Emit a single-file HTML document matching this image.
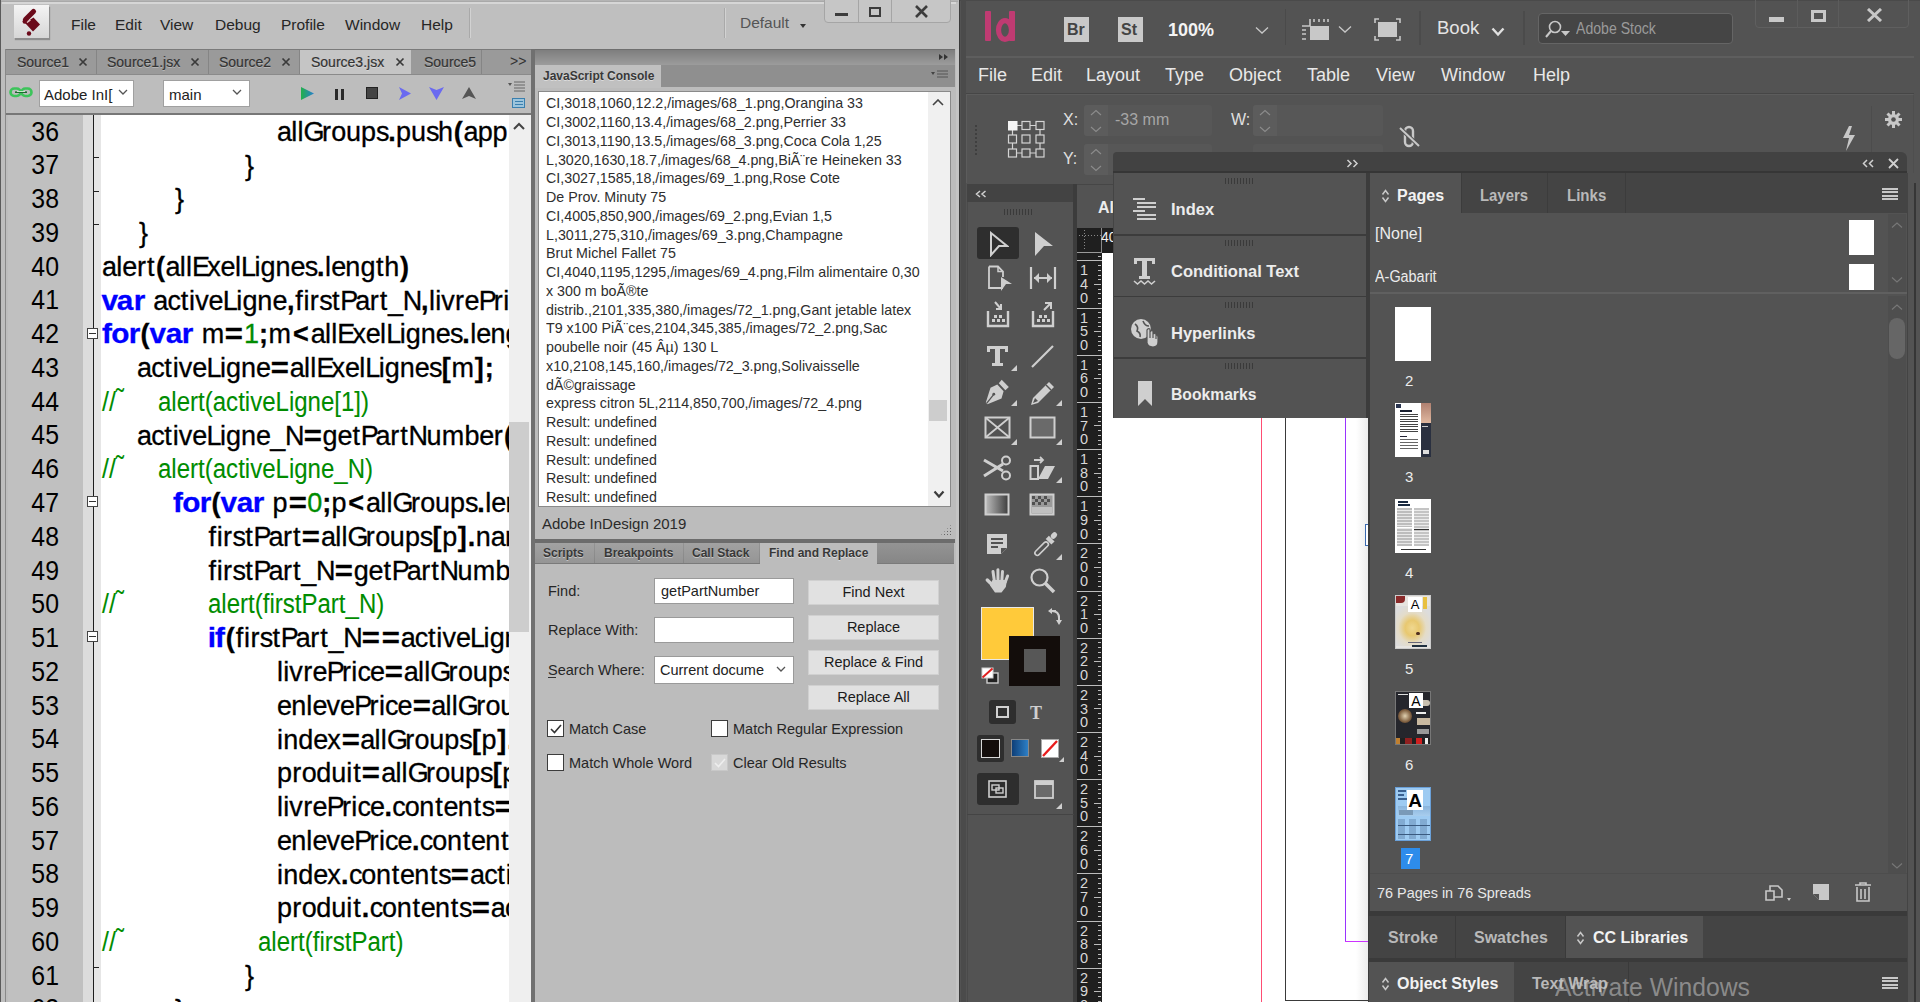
<!DOCTYPE html>
<html><head><meta charset="utf-8">
<style>
*{margin:0;padding:0;box-sizing:border-box}
html,body{width:1920px;height:1002px;overflow:hidden;background:#535353;font-family:"Liberation Sans",sans-serif}
.a{position:absolute}
.t{position:absolute;white-space:pre;line-height:1}
.tabt{text-shadow:0 1px 0 rgba(255,255,255,.35)}
/* ESTK */
#estk{position:absolute;left:0;top:0;width:960px;height:1002px;background:#bdbdbd;overflow:hidden}
.code{position:absolute;left:0;font-size:28px;color:#000;white-space:pre;line-height:1;transform-origin:0 0}
.code i{display:inline-block;text-align:center;font-style:normal;overflow:visible}
.kw{color:#0000ff;font-weight:bold}
.op{font-weight:bold}
.eq{transform:scaleX(1.15)}
.code .kw{transform:scaleX(1.1)}
.code{-webkit-text-stroke:0.3px currentColor}
.code span.cm{-webkit-text-stroke:0.1px currentColor}
.cm{color:#008c00}
.ln{position:absolute;font-size:28px;color:#000;line-height:1;width:60px;text-align:right}
.con{position:absolute;left:546px;font-size:15px;color:#2e2e2e;white-space:pre;line-height:1;transform-origin:0 0}
.btn{position:absolute;background:#e1e1e1;border:1px solid #d0d0d0;font-size:14.5px;color:#1a1a1a;text-align:center;line-height:23px}
.lbl{position:absolute;font-size:14.5px;color:#262626;white-space:pre;line-height:1}
.cb{position:absolute;width:17px;height:17px;background:#fff;border:1.5px solid #3c3c3c}
.tabb{position:absolute;font-size:12px;font-weight:bold;color:#383838;white-space:pre;line-height:1;text-shadow:0 1px 0 rgba(255,255,255,.45)}
/* InDesign */
.w{color:#f0f0f0}
.mi{position:absolute;font-size:18px;color:#e8e8e8;white-space:pre;line-height:1}
.ptab{position:absolute;font-size:16px;font-weight:bold;color:#b9b9b9;white-space:pre;line-height:1}
.rl{position:absolute;left:1080px;width:14px;font-size:14px;color:#f2f2f2;line-height:15.5px;text-align:center;font-family:"Liberation Sans",sans-serif}
</style></head><body>

<div id="estk">
<!-- title / menu bar -->
<div class="a" style="left:0;top:0;width:960px;height:49px;background:#bfbfbf"></div>
<div class="a" style="left:0;top:0;width:1px;height:1002px;background:#5a5a5a"></div>
<div class="a" style="left:1px;top:0;width:957px;height:1px;background:#b4b4b4"></div>
<div class="a" style="left:1px;top:1px;width:957px;height:1px;background:#a9a9a9"></div>
<div class="a" style="left:2px;top:2px;width:954px;height:2px;background:#d6d6d6"></div>
<!-- logo -->
<div class="a" style="left:14px;top:5px;width:35px;height:33px;background:linear-gradient(#f4f4f4,#d6d6d6);box-shadow:1px 2px 1px #8e8e8e"></div>
<svg class="a" style="left:10px;top:2px" width="44" height="40"><path d="M23.5 9.5 L15.5 17.5" stroke="#6b0a1a" stroke-width="5.2" stroke-linecap="round"/><path d="M23.5 15.5 L30 22.5 L23 29.5 L15 21 Z" fill="#6b0a1a"/><circle cx="14.8" cy="19.5" r="2.3" fill="#6b0a1a"/><circle cx="19" cy="31.5" r="2.2" fill="#6b0a1a"/><path d="M17 20.5 L20.5 18" stroke="#e8c8c8" stroke-width="1.2"/></svg>
<div class="t" style="left:71px;top:17px;font-size:15.5px;color:#262626">File</div>
<div class="t" style="left:115px;top:17px;font-size:15.5px;color:#262626">Edit</div>
<div class="t" style="left:160px;top:17px;font-size:15.5px;color:#262626">View</div>
<div class="t" style="left:215px;top:17px;font-size:15.5px;color:#262626">Debug</div>
<div class="t" style="left:281px;top:17px;font-size:15.5px;color:#262626">Profile</div>
<div class="t" style="left:345px;top:17px;font-size:15.5px;color:#262626">Window</div>
<div class="t" style="left:421px;top:17px;font-size:15.5px;color:#262626">Help</div>
<div class="a" style="left:724px;top:8px;width:1px;height:30px;background:#a9a9a9;box-shadow:1px 0 0 #d2d2d2"></div>
<div class="a" style="left:469px;top:8px;width:1px;height:30px;background:#a9a9a9;box-shadow:1px 0 0 #d2d2d2"></div>
<div class="t" style="left:740px;top:15px;font-size:15.5px;color:#555">Default</div>
<div class="a" style="left:800px;top:24px;width:0;height:0;border-left:3px solid transparent;border-right:3px solid transparent;border-top:4px solid #333"></div>
<!-- window buttons -->
<div class="a" style="left:824px;top:-2px;width:127px;height:25px;border:1px solid #a5a5a5;border-radius:0 0 4px 4px;background:#c6c6c6"></div>
<div class="a" style="left:858px;top:0;width:1px;height:23px;background:#a5a5a5"></div>
<div class="a" style="left:891px;top:0;width:1px;height:23px;background:#a5a5a5"></div>
<div class="a" style="left:835px;top:13px;width:13px;height:3px;background:#3c3c3c"></div>
<div class="a" style="left:869px;top:7px;width:12px;height:10px;border:2px solid #3c3c3c"></div>
<svg class="a" style="left:914px;top:5px" width="15" height="13"><path d="M2 1 L13 12 M13 1 L2 12" stroke="#3c3c3c" stroke-width="2.6"/></svg>
<!-- right edge of estk window -->
<div class="a" style="left:954px;top:49px;width:5px;height:953px;background:#c4c4c4;border-left:1px solid #8c8c8c"></div>
<div class="a" style="left:959px;top:0;width:2px;height:1002px;background:#3a3a3a"></div>

<!-- LEFT PANEL: tab bar -->
<div class="a" style="left:5px;top:49px;width:527px;height:953px;background:#bcbcbc;border-left:1px solid #888"></div>
<div class="a" style="left:6px;top:49px;width:526px;height:26px;background:#9a9a9a;border-top:1px solid #7a7a7a;border-bottom:1px solid #8a8a8a"></div>
<div class="a" style="left:96px;top:50px;width:1px;height:24px;background:#858585"></div>
<div class="a" style="left:208px;top:50px;width:1px;height:24px;background:#858585"></div>
<div class="a" style="left:299px;top:50px;width:1px;height:24px;background:#858585"></div>
<div class="a" style="left:300px;top:50px;width:111px;height:24px;background:#c5c5c5"></div>
<div class="a" style="left:481px;top:50px;width:1px;height:24px;background:#858585"></div>
<div class="t" style="left:17px;top:55px;font-size:14px;color:#333;-webkit-text-stroke:0.2px #333;text-shadow:0 1px 0 rgba(255,255,255,.3)">Source1</div>
<svg class="a" style="left:78px;top:57px" width="10" height="10"><path d="M1.5 1.5 L8.5 8.5 M8.5 1.5 L1.5 8.5" stroke="#3a3a3a" stroke-width="1.7"/></svg>
<div class="t" style="left:107px;top:55px;font-size:14px;color:#333;-webkit-text-stroke:0.2px #333;text-shadow:0 1px 0 rgba(255,255,255,.3)">Source1.jsx</div>
<svg class="a" style="left:190px;top:57px" width="10" height="10"><path d="M1.5 1.5 L8.5 8.5 M8.5 1.5 L1.5 8.5" stroke="#3a3a3a" stroke-width="1.7"/></svg>
<div class="t" style="left:219px;top:55px;font-size:14px;color:#333;-webkit-text-stroke:0.2px #333;text-shadow:0 1px 0 rgba(255,255,255,.3)">Source2</div>
<svg class="a" style="left:281px;top:57px" width="10" height="10"><path d="M1.5 1.5 L8.5 8.5 M8.5 1.5 L1.5 8.5" stroke="#3a3a3a" stroke-width="1.7"/></svg>
<div class="t" style="left:311px;top:55px;font-size:14px;color:#333;-webkit-text-stroke:0.2px #333;text-shadow:0 1px 0 rgba(255,255,255,.3)">Source3.jsx</div>
<svg class="a" style="left:395px;top:57px" width="10" height="10"><path d="M1.5 1.5 L8.5 8.5 M8.5 1.5 L1.5 8.5" stroke="#3a3a3a" stroke-width="1.7"/></svg>
<div class="t" style="left:424px;top:55px;font-size:14px;color:#333;-webkit-text-stroke:0.2px #333;text-shadow:0 1px 0 rgba(255,255,255,.3)">Source5</div>
<div class="t" style="left:510px;top:54px;font-size:14px;color:#333">&gt;&gt;</div>
<!-- toolbar -->
<div class="a" style="left:6px;top:75px;width:526px;height:39px;background:#bdbdbd"></div>
<svg class="a" style="left:9px;top:86px" width="24" height="13"><rect x="1.5" y="2.5" width="10" height="7.5" rx="3.7" fill="none" stroke="#3cc45a" stroke-width="2.6"/><rect x="12.5" y="2.5" width="10" height="7.5" rx="3.7" fill="none" stroke="#3cc45a" stroke-width="2.6"/><path d="M6 6.2 H18" stroke="#1e6a30" stroke-width="1.6"/><path d="M8 5.5 H16" stroke="#e8ffe8" stroke-width="0.8"/></svg>
<div class="a" style="left:39px;top:80px;width:95px;height:27px;background:#fff;border:1px solid #a0a0a0"></div>
<div class="t" style="left:44px;top:87px;font-size:15px;color:#222">Adobe InI[</div>
<svg class="a" style="left:118px;top:89px" width="10" height="7"><path d="M1 1 L5 5 L9 1" stroke="#555" fill="none" stroke-width="1.3"/></svg>
<div class="a" style="left:163px;top:80px;width:87px;height:27px;background:#fff;border:1px solid #a0a0a0"></div>
<div class="t" style="left:169px;top:87px;font-size:15px;color:#222">main</div>
<svg class="a" style="left:232px;top:89px" width="10" height="7"><path d="M1 1 L5 5 L9 1" stroke="#555" fill="none" stroke-width="1.3"/></svg>
<svg class="a" style="left:300px;top:86px" width="15" height="15"><defs><linearGradient id="gp" x1="0" x2="1"><stop offset="0" stop-color="#22b04a"/><stop offset="1" stop-color="#2a7fd0"/></linearGradient></defs><path d="M1 1 L14 7.5 L1 14 Z" fill="url(#gp)"/></svg>
<div class="a" style="left:335px;top:89px;width:3px;height:11px;background:#2a2a2a"></div>
<div class="a" style="left:341px;top:89px;width:3px;height:11px;background:#2a2a2a"></div>
<div class="a" style="left:366px;top:87px;width:12px;height:12px;background:#444;border:1px solid #222"></div>
<svg class="a" style="left:398px;top:86px" width="14" height="15"><path d="M1 1 L13 7.5 L1 14 L4 7.5 Z" fill="#6a6af0"/></svg>
<svg class="a" style="left:428px;top:86px" width="17" height="15"><path d="M1 1 L8.5 4 L16 1 L8.5 14 Z" fill="#6a6af0"/></svg>
<svg class="a" style="left:461px;top:86px" width="16" height="14"><path d="M8 1 L15 13 L8 10 L1 13 Z" fill="#555"/></svg>
<svg class="a" style="left:507px;top:80px" width="20" height="12"><path d="M1 3 L5 3 L3 6 Z" fill="#555"/><path d="M7 2 H18 M7 5 H18 M7 8 H18 M7 11 H18" stroke="#666" stroke-width="1"/></svg>
<div class="a" style="left:512px;top:98px;width:13px;height:10px;border:1.5px solid #3a7fae;background:#9cc4dc"></div>
<div class="a" style="left:515px;top:101px;width:8px;height:1px;background:#3a7fae"></div>
<div class="a" style="left:515px;top:104px;width:8px;height:1px;background:#3a7fae"></div>
<div class="a" style="left:6px;top:113px;width:526px;height:2px;background:#777"></div>

<!-- editor -->
<div class="a" style="left:8px;top:115px;width:75px;height:887px;background:#c0c0c0"></div>
<div class="a" style="left:83px;top:115px;width:10px;height:887px;background:#dcdcdc"></div>
<div class="a" style="left:93px;top:115px;width:1px;height:887px;background:#1e1e1e"></div>
<div class="a" style="left:94px;top:115px;width:7px;height:887px;background:#e6e6e6"></div>
<div class="a" style="left:101px;top:115px;width:408px;height:887px;background:#fff"></div>
<div class="a" style="left:509px;top:115px;width:22px;height:887px;background:#efefef"></div>
<div class="a" style="left:510px;top:120px;width:20px;height:512px;background:#efefef"></div>
<svg class="a" style="left:513px;top:122px" width="12" height="9"><path d="M1 7 L6 2 L11 7" stroke="#444" fill="none" stroke-width="2"/></svg>
<div class="a" style="left:509px;top:422px;width:20px;height:210px;background:#cdcdcd"></div>

<div id="codewrap" class="a" style="left:0;top:115px;width:509px;height:887px;overflow:hidden">
<div class="ln" style="left:-1px;top:3.6px;font-size:27px;transform:scaleX(0.92);transform-origin:100% 0">36</div>
<div class="code" style="left:277px;top:3.8px;font-size:27px"><i class="" style="width:14.18px">a</i><i class="" style="width:6.18px">l</i><i class="" style="width:6.18px">l</i><i class="" style="width:18.01px">G</i><i class="" style="width:9.72px">r</i><i class="" style="width:14.66px">o</i><i class="" style="width:15.07px">u</i><i class="" style="width:14.93px">p</i><i class="" style="width:12.04px">s</i><i class="op" style="width:8.18px">.</i><i class="" style="width:14.93px">p</i><i class="" style="width:15.07px">u</i><i class="" style="width:12.04px">s</i><i class="" style="width:15.07px">h</i><i class="op" style="width:10.34px">(</i><i class="" style="width:14.18px">a</i><i class="" style="width:14.93px">p</i><i class="" style="width:14.93px">p</i><i class="op" style="width:8.18px">.</i><i class="" style="width:14.18px">a</i><i class="" style="width:12.45px">c</i><i class="" style="width:9.02px">t</i><i class="" style="width:6.18px">i</i><i class="" style="width:13.45px">v</i><i class="" style="width:14.20px">e</i><i class="" style="width:18.31px">D</i><i class="" style="width:14.66px">o</i><i class="" style="width:12.45px">c</i><i class="" style="width:15.07px">u</i><i class="" style="width:22.84px">m</i><i class="" style="width:14.20px">e</i><i class="" style="width:15.07px">n</i><i class="" style="width:9.02px">t</i></div>
<div class="ln" style="left:-1px;top:37.4px;font-size:27px;transform:scaleX(0.92);transform-origin:100% 0">37</div>
<div class="code" style="left:243px;top:37.6px;font-size:27px"><i class="" style="width:12.96px">}</i></div>
<div class="ln" style="left:-1px;top:71.1px;font-size:27px;transform:scaleX(0.92);transform-origin:100% 0">38</div>
<div class="code" style="left:173px;top:71.3px;font-size:27px"><i class="" style="width:12.96px">}</i></div>
<div class="ln" style="left:-1px;top:104.9px;font-size:27px;transform:scaleX(0.92);transform-origin:100% 0">39</div>
<div class="code" style="left:137px;top:105.1px;font-size:27px"><i class="" style="width:12.96px">}</i></div>
<div class="ln" style="left:-1px;top:138.6px;font-size:27px;transform:scaleX(0.92);transform-origin:100% 0">40</div>
<div class="code" style="left:102px;top:138.8px;font-size:27px"><i class="" style="width:14.18px">a</i><i class="" style="width:6.18px">l</i><i class="" style="width:14.20px">e</i><i class="" style="width:9.72px">r</i><i class="" style="width:9.02px">t</i><i class="op" style="width:10.34px">(</i><i class="" style="width:14.18px">a</i><i class="" style="width:6.18px">l</i><i class="" style="width:6.18px">l</i><i class="" style="width:15.15px">E</i><i class="" style="width:13.37px">x</i><i class="" style="width:14.20px">e</i><i class="" style="width:6.18px">l</i><i class="" style="width:13.45px">L</i><i class="" style="width:6.18px">i</i><i class="" style="width:14.93px">g</i><i class="" style="width:15.07px">n</i><i class="" style="width:14.20px">e</i><i class="" style="width:12.04px">s</i><i class="op" style="width:8.18px">.</i><i class="" style="width:6.18px">l</i><i class="" style="width:14.20px">e</i><i class="" style="width:15.07px">n</i><i class="" style="width:14.93px">g</i><i class="" style="width:9.02px">t</i><i class="" style="width:15.07px">h</i><i class="op" style="width:10.34px">)</i></div>
<div class="ln" style="left:-1px;top:172.4px;font-size:27px;transform:scaleX(0.92);transform-origin:100% 0">41</div>
<div class="code" style="left:102px;top:172.6px;font-size:27px"><i class="kw" style="width:15.46px">v</i><i class="kw" style="width:16.30px">a</i><i class="kw" style="width:11.18px">r</i><i class="" style="width:8.45px"> </i><i class="" style="width:14.18px">a</i><i class="" style="width:12.45px">c</i><i class="" style="width:9.02px">t</i><i class="" style="width:6.18px">i</i><i class="" style="width:13.45px">v</i><i class="" style="width:14.20px">e</i><i class="" style="width:13.45px">L</i><i class="" style="width:6.18px">i</i><i class="" style="width:14.93px">g</i><i class="" style="width:15.07px">n</i><i class="" style="width:14.20px">e</i><i class="op" style="width:8.18px">,</i><i class="" style="width:8.59px">f</i><i class="" style="width:6.18px">i</i><i class="" style="width:9.72px">r</i><i class="" style="width:12.04px">s</i><i class="" style="width:9.02px">t</i><i class="" style="width:14.88px">P</i><i class="" style="width:14.18px">a</i><i class="" style="width:9.72px">r</i><i class="" style="width:9.02px">t</i><i class="" style="width:14.74px">_</i><i class="" style="width:18.01px">N</i><i class="op" style="width:8.18px">,</i><i class="" style="width:6.18px">l</i><i class="" style="width:6.18px">i</i><i class="" style="width:13.45px">v</i><i class="" style="width:9.72px">r</i><i class="" style="width:14.20px">e</i><i class="" style="width:14.88px">P</i><i class="" style="width:9.72px">r</i><i class="" style="width:6.18px">i</i><i class="" style="width:12.45px">c</i><i class="" style="width:14.20px">e</i><i class="op" style="width:8.18px">,</i><i class="" style="width:14.20px">e</i><i class="" style="width:15.07px">n</i><i class="" style="width:6.18px">l</i><i class="" style="width:14.20px">e</i><i class="" style="width:13.45px">v</i><i class="" style="width:14.20px">e</i><i class="" style="width:14.88px">P</i><i class="" style="width:9.72px">r</i><i class="" style="width:6.18px">i</i><i class="" style="width:12.45px">c</i><i class="" style="width:14.20px">e</i></div>
<div class="ln" style="left:-1px;top:206.2px;font-size:27px;transform:scaleX(0.92);transform-origin:100% 0">42</div>
<div class="code" style="left:102px;top:206.4px;font-size:27px"><i class="kw" style="width:9.87px">f</i><i class="kw" style="width:16.86px">o</i><i class="kw" style="width:11.18px">r</i><i class="op" style="width:10.34px">(</i><i class="kw" style="width:15.46px">v</i><i class="kw" style="width:16.30px">a</i><i class="kw" style="width:11.18px">r</i><i class="" style="width:8.45px"> </i><i class="" style="width:22.84px">m</i><i class="op eq" style="width:19.66px">=</i><i class="cm" style="width:14.74px">1</i><i class="op" style="width:9.56px">;</i><i class="" style="width:22.84px">m</i><i class="op" style="width:19.66px">&lt;</i><i class="" style="width:14.18px">a</i><i class="" style="width:6.18px">l</i><i class="" style="width:6.18px">l</i><i class="" style="width:15.15px">E</i><i class="" style="width:13.37px">x</i><i class="" style="width:14.20px">e</i><i class="" style="width:6.18px">l</i><i class="" style="width:13.45px">L</i><i class="" style="width:6.18px">i</i><i class="" style="width:14.93px">g</i><i class="" style="width:15.07px">n</i><i class="" style="width:14.20px">e</i><i class="" style="width:12.04px">s</i><i class="op" style="width:8.18px">.</i><i class="" style="width:6.18px">l</i><i class="" style="width:14.20px">e</i><i class="" style="width:15.07px">n</i><i class="" style="width:14.93px">g</i><i class="" style="width:9.02px">t</i><i class="" style="width:15.07px">h</i><i class="op" style="width:9.56px">;</i><i class="" style="width:22.84px">m</i><i class="" style="width:19.66px">+</i><i class="" style="width:19.66px">+</i><i class="op" style="width:10.34px">)</i><i class="" style="width:12.96px">{</i></div>
<div class="ln" style="left:-1px;top:239.9px;font-size:27px;transform:scaleX(0.92);transform-origin:100% 0">43</div>
<div class="code" style="left:137px;top:240.1px;font-size:27px"><i class="" style="width:14.18px">a</i><i class="" style="width:12.45px">c</i><i class="" style="width:9.02px">t</i><i class="" style="width:6.18px">i</i><i class="" style="width:13.45px">v</i><i class="" style="width:14.20px">e</i><i class="" style="width:13.45px">L</i><i class="" style="width:6.18px">i</i><i class="" style="width:14.93px">g</i><i class="" style="width:15.07px">n</i><i class="" style="width:14.20px">e</i><i class="op eq" style="width:19.66px">=</i><i class="" style="width:14.18px">a</i><i class="" style="width:6.18px">l</i><i class="" style="width:6.18px">l</i><i class="" style="width:15.15px">E</i><i class="" style="width:13.37px">x</i><i class="" style="width:14.20px">e</i><i class="" style="width:6.18px">l</i><i class="" style="width:13.45px">L</i><i class="" style="width:6.18px">i</i><i class="" style="width:14.93px">g</i><i class="" style="width:15.07px">n</i><i class="" style="width:14.20px">e</i><i class="" style="width:12.04px">s</i><i class="op" style="width:10.34px">[</i><i class="" style="width:22.84px">m</i><i class="op" style="width:10.34px">]</i><i class="op" style="width:9.56px">;</i></div>
<div class="ln" style="left:-1px;top:273.7px;font-size:27px;transform:scaleX(0.92);transform-origin:100% 0">44</div>
<div class="code" style="left:102px;top:273.9px;font-size:27px"><span class="cm" style="display:inline-block;font-size:27px;transform:scaleX(0.92);transform-origin:0 0">//<span style="position:relative;top:-3px">˜</span></span></div>
<div class="code" style="left:158px;top:273.9px;font-size:27px"><span class="cm" style="display:inline-block;transform:scaleX(0.89);transform-origin:0 0">alert(activeLigne[1])</span></div>
<div class="ln" style="left:-1px;top:307.4px;font-size:27px;transform:scaleX(0.92);transform-origin:100% 0">45</div>
<div class="code" style="left:137px;top:307.6px;font-size:27px"><i class="" style="width:14.18px">a</i><i class="" style="width:12.45px">c</i><i class="" style="width:9.02px">t</i><i class="" style="width:6.18px">i</i><i class="" style="width:13.45px">v</i><i class="" style="width:14.20px">e</i><i class="" style="width:13.45px">L</i><i class="" style="width:6.18px">i</i><i class="" style="width:14.93px">g</i><i class="" style="width:15.07px">n</i><i class="" style="width:14.20px">e</i><i class="" style="width:14.74px">_</i><i class="" style="width:18.01px">N</i><i class="op eq" style="width:19.66px">=</i><i class="" style="width:14.93px">g</i><i class="" style="width:14.20px">e</i><i class="" style="width:9.02px">t</i><i class="" style="width:14.88px">P</i><i class="" style="width:14.18px">a</i><i class="" style="width:9.72px">r</i><i class="" style="width:9.02px">t</i><i class="" style="width:18.01px">N</i><i class="" style="width:15.07px">u</i><i class="" style="width:22.84px">m</i><i class="" style="width:14.93px">b</i><i class="" style="width:14.20px">e</i><i class="" style="width:9.72px">r</i><i class="op" style="width:10.34px">(</i><i class="" style="width:14.18px">a</i><i class="" style="width:12.45px">c</i><i class="" style="width:9.02px">t</i><i class="" style="width:6.18px">i</i><i class="" style="width:13.45px">v</i><i class="" style="width:14.20px">e</i><i class="" style="width:13.45px">L</i><i class="" style="width:6.18px">i</i><i class="" style="width:14.93px">g</i><i class="" style="width:15.07px">n</i><i class="" style="width:14.20px">e</i><i class="op" style="width:10.34px">[</i><i class="" style="width:14.74px">1</i><i class="op" style="width:10.34px">]</i><i class="op" style="width:10.34px">)</i></div>
<div class="ln" style="left:-1px;top:341.2px;font-size:27px;transform:scaleX(0.92);transform-origin:100% 0">46</div>
<div class="code" style="left:102px;top:341.4px;font-size:27px"><span class="cm" style="display:inline-block;font-size:27px;transform:scaleX(0.92);transform-origin:0 0">//<span style="position:relative;top:-3px">˜</span></span></div>
<div class="code" style="left:158px;top:341.4px;font-size:27px"><span class="cm" style="display:inline-block;transform:scaleX(0.89);transform-origin:0 0">alert(activeLigne_N)</span></div>
<div class="ln" style="left:-1px;top:375.0px;font-size:27px;transform:scaleX(0.92);transform-origin:100% 0">47</div>
<div class="code" style="left:173px;top:375.2px;font-size:27px"><i class="kw" style="width:9.87px">f</i><i class="kw" style="width:16.86px">o</i><i class="kw" style="width:11.18px">r</i><i class="op" style="width:10.34px">(</i><i class="kw" style="width:15.46px">v</i><i class="kw" style="width:16.30px">a</i><i class="kw" style="width:11.18px">r</i><i class="" style="width:8.45px"> </i><i class="" style="width:14.93px">p</i><i class="op eq" style="width:19.66px">=</i><i class="cm" style="width:14.74px">0</i><i class="op" style="width:9.56px">;</i><i class="" style="width:14.93px">p</i><i class="op" style="width:19.66px">&lt;</i><i class="" style="width:14.18px">a</i><i class="" style="width:6.18px">l</i><i class="" style="width:6.18px">l</i><i class="" style="width:18.01px">G</i><i class="" style="width:9.72px">r</i><i class="" style="width:14.66px">o</i><i class="" style="width:15.07px">u</i><i class="" style="width:14.93px">p</i><i class="" style="width:12.04px">s</i><i class="op" style="width:8.18px">.</i><i class="" style="width:6.18px">l</i><i class="" style="width:14.20px">e</i><i class="" style="width:15.07px">n</i><i class="" style="width:14.93px">g</i><i class="" style="width:9.02px">t</i><i class="" style="width:15.07px">h</i><i class="op" style="width:9.56px">;</i><i class="" style="width:14.93px">p</i><i class="" style="width:19.66px">+</i><i class="" style="width:19.66px">+</i><i class="op" style="width:10.34px">)</i><i class="" style="width:12.96px">{</i></div>
<div class="ln" style="left:-1px;top:408.7px;font-size:27px;transform:scaleX(0.92);transform-origin:100% 0">48</div>
<div class="code" style="left:208px;top:408.9px;font-size:27px"><i class="" style="width:8.59px">f</i><i class="" style="width:6.18px">i</i><i class="" style="width:9.72px">r</i><i class="" style="width:12.04px">s</i><i class="" style="width:9.02px">t</i><i class="" style="width:14.88px">P</i><i class="" style="width:14.18px">a</i><i class="" style="width:9.72px">r</i><i class="" style="width:9.02px">t</i><i class="op eq" style="width:19.66px">=</i><i class="" style="width:14.18px">a</i><i class="" style="width:6.18px">l</i><i class="" style="width:6.18px">l</i><i class="" style="width:18.01px">G</i><i class="" style="width:9.72px">r</i><i class="" style="width:14.66px">o</i><i class="" style="width:15.07px">u</i><i class="" style="width:14.93px">p</i><i class="" style="width:12.04px">s</i><i class="op" style="width:10.34px">[</i><i class="" style="width:14.93px">p</i><i class="op" style="width:10.34px">]</i><i class="op" style="width:8.18px">.</i><i class="" style="width:15.07px">n</i><i class="" style="width:14.18px">a</i><i class="" style="width:22.84px">m</i><i class="" style="width:14.20px">e</i></div>
<div class="ln" style="left:-1px;top:442.5px;font-size:27px;transform:scaleX(0.92);transform-origin:100% 0">49</div>
<div class="code" style="left:208px;top:442.7px;font-size:27px"><i class="" style="width:8.59px">f</i><i class="" style="width:6.18px">i</i><i class="" style="width:9.72px">r</i><i class="" style="width:12.04px">s</i><i class="" style="width:9.02px">t</i><i class="" style="width:14.88px">P</i><i class="" style="width:14.18px">a</i><i class="" style="width:9.72px">r</i><i class="" style="width:9.02px">t</i><i class="" style="width:14.74px">_</i><i class="" style="width:18.01px">N</i><i class="op eq" style="width:19.66px">=</i><i class="" style="width:14.93px">g</i><i class="" style="width:14.20px">e</i><i class="" style="width:9.02px">t</i><i class="" style="width:14.88px">P</i><i class="" style="width:14.18px">a</i><i class="" style="width:9.72px">r</i><i class="" style="width:9.02px">t</i><i class="" style="width:18.01px">N</i><i class="" style="width:15.07px">u</i><i class="" style="width:22.84px">m</i><i class="" style="width:14.93px">b</i><i class="" style="width:14.20px">e</i><i class="" style="width:9.72px">r</i><i class="op" style="width:10.34px">(</i><i class="" style="width:8.59px">f</i><i class="" style="width:6.18px">i</i><i class="" style="width:9.72px">r</i><i class="" style="width:12.04px">s</i><i class="" style="width:9.02px">t</i><i class="" style="width:14.88px">P</i><i class="" style="width:14.18px">a</i><i class="" style="width:9.72px">r</i><i class="" style="width:9.02px">t</i><i class="op" style="width:10.34px">)</i></div>
<div class="ln" style="left:-1px;top:476.2px;font-size:27px;transform:scaleX(0.92);transform-origin:100% 0">50</div>
<div class="code" style="left:102px;top:476.4px;font-size:27px"><span class="cm" style="display:inline-block;font-size:27px;transform:scaleX(0.92);transform-origin:0 0">//<span style="position:relative;top:-3px">˜</span></span></div>
<div class="code" style="left:208px;top:476.4px;font-size:27px"><span class="cm" style="display:inline-block;transform:scaleX(0.89);transform-origin:0 0">alert(firstPart_N)</span></div>
<div class="ln" style="left:-1px;top:510.0px;font-size:27px;transform:scaleX(0.92);transform-origin:100% 0">51</div>
<div class="code" style="left:208px;top:510.2px;font-size:27px"><i class="kw" style="width:7.11px">i</i><i class="kw" style="width:9.87px">f</i><i class="op" style="width:10.34px">(</i><i class="" style="width:8.59px">f</i><i class="" style="width:6.18px">i</i><i class="" style="width:9.72px">r</i><i class="" style="width:12.04px">s</i><i class="" style="width:9.02px">t</i><i class="" style="width:14.88px">P</i><i class="" style="width:14.18px">a</i><i class="" style="width:9.72px">r</i><i class="" style="width:9.02px">t</i><i class="" style="width:14.74px">_</i><i class="" style="width:18.01px">N</i><i class="op eq" style="width:19.66px">=</i><i class="op eq" style="width:19.66px">=</i><i class="" style="width:14.18px">a</i><i class="" style="width:12.45px">c</i><i class="" style="width:9.02px">t</i><i class="" style="width:6.18px">i</i><i class="" style="width:13.45px">v</i><i class="" style="width:14.20px">e</i><i class="" style="width:13.45px">L</i><i class="" style="width:6.18px">i</i><i class="" style="width:14.93px">g</i><i class="" style="width:15.07px">n</i><i class="" style="width:14.20px">e</i><i class="" style="width:14.74px">_</i><i class="" style="width:18.01px">N</i><i class="op" style="width:10.34px">)</i><i class="" style="width:12.96px">{</i></div>
<div class="ln" style="left:-1px;top:543.8px;font-size:27px;transform:scaleX(0.92);transform-origin:100% 0">52</div>
<div class="code" style="left:277px;top:544.0px;font-size:27px"><i class="" style="width:6.18px">l</i><i class="" style="width:6.18px">i</i><i class="" style="width:13.45px">v</i><i class="" style="width:9.72px">r</i><i class="" style="width:14.20px">e</i><i class="" style="width:14.88px">P</i><i class="" style="width:9.72px">r</i><i class="" style="width:6.18px">i</i><i class="" style="width:12.45px">c</i><i class="" style="width:14.20px">e</i><i class="op eq" style="width:19.66px">=</i><i class="" style="width:14.18px">a</i><i class="" style="width:6.18px">l</i><i class="" style="width:6.18px">l</i><i class="" style="width:18.01px">G</i><i class="" style="width:9.72px">r</i><i class="" style="width:14.66px">o</i><i class="" style="width:15.07px">u</i><i class="" style="width:14.93px">p</i><i class="" style="width:12.04px">s</i><i class="op" style="width:10.34px">[</i><i class="" style="width:14.93px">p</i><i class="op" style="width:10.34px">]</i></div>
<div class="ln" style="left:-1px;top:577.5px;font-size:27px;transform:scaleX(0.92);transform-origin:100% 0">53</div>
<div class="code" style="left:277px;top:577.7px;font-size:27px"><i class="" style="width:14.20px">e</i><i class="" style="width:15.07px">n</i><i class="" style="width:6.18px">l</i><i class="" style="width:14.20px">e</i><i class="" style="width:13.45px">v</i><i class="" style="width:14.20px">e</i><i class="" style="width:14.88px">P</i><i class="" style="width:9.72px">r</i><i class="" style="width:6.18px">i</i><i class="" style="width:12.45px">c</i><i class="" style="width:14.20px">e</i><i class="op eq" style="width:19.66px">=</i><i class="" style="width:14.18px">a</i><i class="" style="width:6.18px">l</i><i class="" style="width:6.18px">l</i><i class="" style="width:18.01px">G</i><i class="" style="width:9.72px">r</i><i class="" style="width:14.66px">o</i><i class="" style="width:15.07px">u</i><i class="" style="width:14.93px">p</i><i class="" style="width:12.04px">s</i><i class="op" style="width:10.34px">[</i><i class="" style="width:14.93px">p</i><i class="op" style="width:10.34px">]</i></div>
<div class="ln" style="left:-1px;top:611.3px;font-size:27px;transform:scaleX(0.92);transform-origin:100% 0">54</div>
<div class="code" style="left:277px;top:611.5px;font-size:27px"><i class="" style="width:6.18px">i</i><i class="" style="width:15.07px">n</i><i class="" style="width:14.93px">d</i><i class="" style="width:14.20px">e</i><i class="" style="width:13.37px">x</i><i class="op eq" style="width:19.66px">=</i><i class="" style="width:14.18px">a</i><i class="" style="width:6.18px">l</i><i class="" style="width:6.18px">l</i><i class="" style="width:18.01px">G</i><i class="" style="width:9.72px">r</i><i class="" style="width:14.66px">o</i><i class="" style="width:15.07px">u</i><i class="" style="width:14.93px">p</i><i class="" style="width:12.04px">s</i><i class="op" style="width:10.34px">[</i><i class="" style="width:14.93px">p</i><i class="op" style="width:10.34px">]</i><i class="op" style="width:8.18px">.</i></div>
<div class="ln" style="left:-1px;top:645.0px;font-size:27px;transform:scaleX(0.92);transform-origin:100% 0">55</div>
<div class="code" style="left:277px;top:645.2px;font-size:27px"><i class="" style="width:14.93px">p</i><i class="" style="width:9.72px">r</i><i class="" style="width:14.66px">o</i><i class="" style="width:14.93px">d</i><i class="" style="width:15.07px">u</i><i class="" style="width:6.18px">i</i><i class="" style="width:9.02px">t</i><i class="op eq" style="width:19.66px">=</i><i class="" style="width:14.18px">a</i><i class="" style="width:6.18px">l</i><i class="" style="width:6.18px">l</i><i class="" style="width:18.01px">G</i><i class="" style="width:9.72px">r</i><i class="" style="width:14.66px">o</i><i class="" style="width:15.07px">u</i><i class="" style="width:14.93px">p</i><i class="" style="width:12.04px">s</i><i class="op" style="width:10.34px">[</i><i class="" style="width:14.93px">p</i><i class="op" style="width:10.34px">]</i></div>
<div class="ln" style="left:-1px;top:678.8px;font-size:27px;transform:scaleX(0.92);transform-origin:100% 0">56</div>
<div class="code" style="left:277px;top:679.0px;font-size:27px"><i class="" style="width:6.18px">l</i><i class="" style="width:6.18px">i</i><i class="" style="width:13.45px">v</i><i class="" style="width:9.72px">r</i><i class="" style="width:14.20px">e</i><i class="" style="width:14.88px">P</i><i class="" style="width:9.72px">r</i><i class="" style="width:6.18px">i</i><i class="" style="width:12.45px">c</i><i class="" style="width:14.20px">e</i><i class="op" style="width:8.18px">.</i><i class="" style="width:12.45px">c</i><i class="" style="width:14.66px">o</i><i class="" style="width:15.07px">n</i><i class="" style="width:9.02px">t</i><i class="" style="width:14.20px">e</i><i class="" style="width:15.07px">n</i><i class="" style="width:9.02px">t</i><i class="" style="width:12.04px">s</i><i class="op eq" style="width:19.66px">=</i><i class="" style="width:14.18px">a</i><i class="" style="width:12.45px">c</i><i class="" style="width:9.02px">t</i><i class="" style="width:6.18px">i</i><i class="" style="width:13.45px">v</i><i class="" style="width:14.20px">e</i><i class="" style="width:13.45px">L</i><i class="" style="width:6.18px">i</i><i class="" style="width:14.93px">g</i><i class="" style="width:15.07px">n</i><i class="" style="width:14.20px">e</i></div>
<div class="ln" style="left:-1px;top:712.6px;font-size:27px;transform:scaleX(0.92);transform-origin:100% 0">57</div>
<div class="code" style="left:277px;top:712.8px;font-size:27px"><i class="" style="width:14.20px">e</i><i class="" style="width:15.07px">n</i><i class="" style="width:6.18px">l</i><i class="" style="width:14.20px">e</i><i class="" style="width:13.45px">v</i><i class="" style="width:14.20px">e</i><i class="" style="width:14.88px">P</i><i class="" style="width:9.72px">r</i><i class="" style="width:6.18px">i</i><i class="" style="width:12.45px">c</i><i class="" style="width:14.20px">e</i><i class="op" style="width:8.18px">.</i><i class="" style="width:12.45px">c</i><i class="" style="width:14.66px">o</i><i class="" style="width:15.07px">n</i><i class="" style="width:9.02px">t</i><i class="" style="width:14.20px">e</i><i class="" style="width:15.07px">n</i><i class="" style="width:9.02px">t</i><i class="" style="width:12.04px">s</i><i class="op eq" style="width:19.66px">=</i><i class="" style="width:14.18px">a</i><i class="" style="width:12.45px">c</i><i class="" style="width:9.02px">t</i><i class="" style="width:6.18px">i</i><i class="" style="width:13.45px">v</i><i class="" style="width:14.20px">e</i><i class="" style="width:13.45px">L</i><i class="" style="width:6.18px">i</i><i class="" style="width:14.93px">g</i><i class="" style="width:15.07px">n</i><i class="" style="width:14.20px">e</i></div>
<div class="ln" style="left:-1px;top:746.3px;font-size:27px;transform:scaleX(0.92);transform-origin:100% 0">58</div>
<div class="code" style="left:277px;top:746.5px;font-size:27px"><i class="" style="width:6.18px">i</i><i class="" style="width:15.07px">n</i><i class="" style="width:14.93px">d</i><i class="" style="width:14.20px">e</i><i class="" style="width:13.37px">x</i><i class="op" style="width:8.18px">.</i><i class="" style="width:12.45px">c</i><i class="" style="width:14.66px">o</i><i class="" style="width:15.07px">n</i><i class="" style="width:9.02px">t</i><i class="" style="width:14.20px">e</i><i class="" style="width:15.07px">n</i><i class="" style="width:9.02px">t</i><i class="" style="width:12.04px">s</i><i class="op eq" style="width:19.66px">=</i><i class="" style="width:14.18px">a</i><i class="" style="width:12.45px">c</i><i class="" style="width:9.02px">t</i><i class="" style="width:6.18px">i</i><i class="" style="width:13.45px">v</i><i class="" style="width:14.20px">e</i><i class="" style="width:13.45px">L</i><i class="" style="width:6.18px">i</i><i class="" style="width:14.93px">g</i><i class="" style="width:15.07px">n</i><i class="" style="width:14.20px">e</i></div>
<div class="ln" style="left:-1px;top:780.1px;font-size:27px;transform:scaleX(0.92);transform-origin:100% 0">59</div>
<div class="code" style="left:277px;top:780.3px;font-size:27px"><i class="" style="width:14.93px">p</i><i class="" style="width:9.72px">r</i><i class="" style="width:14.66px">o</i><i class="" style="width:14.93px">d</i><i class="" style="width:15.07px">u</i><i class="" style="width:6.18px">i</i><i class="" style="width:9.02px">t</i><i class="op" style="width:8.18px">.</i><i class="" style="width:12.45px">c</i><i class="" style="width:14.66px">o</i><i class="" style="width:15.07px">n</i><i class="" style="width:9.02px">t</i><i class="" style="width:14.20px">e</i><i class="" style="width:15.07px">n</i><i class="" style="width:9.02px">t</i><i class="" style="width:12.04px">s</i><i class="op eq" style="width:19.66px">=</i><i class="" style="width:14.18px">a</i><i class="" style="width:12.45px">c</i><i class="" style="width:9.02px">t</i><i class="" style="width:6.18px">i</i><i class="" style="width:13.45px">v</i><i class="" style="width:14.20px">e</i><i class="" style="width:13.45px">L</i><i class="" style="width:6.18px">i</i><i class="" style="width:14.93px">g</i><i class="" style="width:15.07px">n</i><i class="" style="width:14.20px">e</i></div>
<div class="ln" style="left:-1px;top:813.8px;font-size:27px;transform:scaleX(0.92);transform-origin:100% 0">60</div>
<div class="code" style="left:102px;top:814.0px;font-size:27px"><span class="cm" style="display:inline-block;font-size:27px;transform:scaleX(0.92);transform-origin:0 0">//<span style="position:relative;top:-3px">˜</span></span></div>
<div class="code" style="left:258px;top:814.0px;font-size:27px"><span class="cm" style="display:inline-block;transform:scaleX(0.89);transform-origin:0 0">alert(firstPart)</span></div>
<div class="ln" style="left:-1px;top:847.6px;font-size:27px;transform:scaleX(0.92);transform-origin:100% 0">61</div>
<div class="code" style="left:243px;top:847.8px;font-size:27px"><i class="" style="width:12.96px">}</i></div>
<div class="ln" style="left:-1px;top:881.4px;font-size:27px;transform:scaleX(0.92);transform-origin:100% 0">62</div>
<div class="code" style="left:173px;top:881.6px;font-size:27px"><i class="" style="width:12.96px">}</i></div>
<div class="a" style="left:87px;top:212.6px;width:11px;height:11px;border:1px solid #444;background:#fff"></div><div class="a" style="left:89px;top:217.6px;width:7px;height:1px;background:#333"></div>
<div class="a" style="left:87px;top:381.4px;width:11px;height:11px;border:1px solid #444;background:#fff"></div><div class="a" style="left:89px;top:386.4px;width:7px;height:1px;background:#333"></div>
<div class="a" style="left:87px;top:516.4px;width:11px;height:11px;border:1px solid #444;background:#fff"></div><div class="a" style="left:89px;top:521.4px;width:7px;height:1px;background:#333"></div>
<div class="a" style="left:93px;top:41.8px;width:6px;height:1px;background:#222"></div>
<div class="a" style="left:93px;top:75.5px;width:6px;height:1px;background:#222"></div>
<div class="a" style="left:93px;top:109.3px;width:6px;height:1px;background:#222"></div>
<div class="a" style="left:93px;top:852.0px;width:6px;height:1px;background:#222"></div>
</div>

<!-- RIGHT PANEL -->
<div class="a" style="left:531px;top:49px;width:4px;height:953px;background:#707070"></div>
<div class="a" style="left:535px;top:49px;width:421px;height:953px;background:#bcbcbc"></div>
<div class="a" style="left:535px;top:49px;width:420px;height:16px;background:linear-gradient(#7e7e7e,#9c9c9c);border-top:1px solid #6e6e6e"></div>
<svg class="a" style="left:938px;top:53px" width="12" height="8"><path d="M1 1 L5 4 L1 7 Z M6 1 L10 4 L6 7 Z" fill="#333"/></svg>
<div class="a" style="left:535px;top:65px;width:420px;height:22px;background:#8f8f8f"></div>
<div class="a" style="left:535px;top:65px;width:126px;height:23px;background:#c0c0c0"></div>
<div class="tabb" style="left:543px;top:70px">JavaScript Console</div>
<svg class="a" style="left:930px;top:69px" width="20" height="10"><path d="M1 3 L5 3 L3 6 Z" fill="#444"/><path d="M7 2 H18 M7 5 H18 M7 8 H18" stroke="#555" stroke-width="1"/></svg>
<div class="a" style="left:538px;top:91px;width:413px;height:416px;background:#fff;border:1px solid #8a8a8a"></div>
<div class="a" style="left:928px;top:92px;width:22px;height:414px;background:#f0f0f0"></div>
<svg class="a" style="left:932px;top:99px" width="12" height="8"><path d="M1 6 L6 1 L11 6" stroke="#444" fill="none" stroke-width="1.6"/></svg>
<div class="a" style="left:929px;top:400px;width:18px;height:21px;background:#cdcdcd"></div>
<svg class="a" style="left:933px;top:490px" width="12" height="9"><path d="M1.5 1.5 L6 6.5 L10.5 1.5" stroke="#3c3c3c" fill="none" stroke-width="2.2"/></svg>
<div class="a" style="left:940px;top:524px;width:12px;height:12px;background:radial-gradient(circle,#666 0.6px,transparent 0.8px) 0 0/3px 3px;clip-path:polygon(100% 0,100% 100%,0 100%)"></div>
<div id="conwrap" class="a" style="left:0;top:0;width:928px;height:506px;overflow:hidden">
<div class="con" style="top:95.2px;transform:scaleX(0.95)">CI,3018,1060,12.2,/images/68_1.png,Orangina 33</div>
<div class="con" style="top:114.0px;transform:scaleX(0.95)">CI,3002,1160,13.4,/images/68_2.png,Perrier 33</div>
<div class="con" style="top:132.7px;transform:scaleX(0.95)">CI,3013,1190,13.5,/images/68_3.png,Coca Cola 1,25</div>
<div class="con" style="top:151.5px;transform:scaleX(0.95)">L,3020,1630,18.7,/images/68_4.png,BiÃ¨re Heineken 33</div>
<div class="con" style="top:170.2px;transform:scaleX(0.95)">CI,3027,1585,18,/images/69_1.png,Rose Cote</div>
<div class="con" style="top:189.0px;transform:scaleX(0.95)">De Prov. Minuty 75</div>
<div class="con" style="top:207.8px;transform:scaleX(0.95)">CI,4005,850,900,/images/69_2.png,Evian 1,5</div>
<div class="con" style="top:226.5px;transform:scaleX(0.95)">L,3011,275,310,/images/69_3.png,Champagne</div>
<div class="con" style="top:245.3px;transform:scaleX(0.95)">Brut Michel Fallet 75</div>
<div class="con" style="top:264.0px;transform:scaleX(0.95)">CI,4040,1195,1295,/images/69_4.png,Film alimentaire 0,30</div>
<div class="con" style="top:282.8px;transform:scaleX(0.95)">x 300 m boÃ®te</div>
<div class="con" style="top:301.6px;transform:scaleX(0.95)">distrib.,2101,335,380,/images/72_1.png,Gant jetable latex</div>
<div class="con" style="top:320.3px;transform:scaleX(0.95)">T9 x100 PiÃ¨ces,2104,345,385,/images/72_2.png,Sac</div>
<div class="con" style="top:339.1px;transform:scaleX(0.95)">poubelle noir (45 Âµ) 130 L</div>
<div class="con" style="top:357.8px;transform:scaleX(0.95)">x10,2108,145,160,/images/72_3.png,Solivaisselle</div>
<div class="con" style="top:376.6px;transform:scaleX(0.95)">dÃ©graissage</div>
<div class="con" style="top:395.4px;transform:scaleX(0.95)">express citron 5L,2114,850,700,/images/72_4.png</div>
<div class="con" style="top:414.1px;transform:scaleX(0.95)">Result: undefined</div>
<div class="con" style="top:432.9px;transform:scaleX(0.95)">Result: undefined</div>
<div class="con" style="top:451.6px;transform:scaleX(0.95)">Result: undefined</div>
<div class="con" style="top:470.4px;transform:scaleX(0.95)">Result: undefined</div>
<div class="con" style="top:489.2px;transform:scaleX(0.95)">Result: undefined</div>
<div class="con" style="top:507.9px;transform:scaleX(0.95)">Result: undefined</div>
</div>
<div class="t" style="left:542px;top:516px;font-size:15px;color:#2a2a2a">Adobe InDesign 2019</div>
<div class="a" style="left:535px;top:539px;width:420px;height:4px;background:#6c6c6c"></div>
<div class="a" style="left:535px;top:543px;width:419px;height:21px;background:linear-gradient(#949494,#868686);border-bottom:1px solid #7a7a7a"></div>
<div class="a" style="left:535px;top:543px;width:59px;height:20px;background:linear-gradient(#a2a2a2,#959595)"></div>
<div class="a" style="left:595px;top:543px;width:88px;height:20px;background:linear-gradient(#a2a2a2,#959595)"></div>
<div class="a" style="left:684px;top:543px;width:75px;height:20px;background:linear-gradient(#a2a2a2,#959595)"></div>
<div class="a" style="left:760px;top:543px;width:117px;height:21px;background:#bcbcbc"></div>
<div class="tabb" style="left:543px;top:547px">Scripts</div>
<div class="tabb" style="left:604px;top:547px">Breakpoints</div>
<div class="tabb" style="left:692px;top:547px">Call Stack</div>
<div class="tabb" style="left:769px;top:547px">Find and Replace</div>

<div class="lbl" style="left:548px;top:584px">Find:</div>
<div class="lbl" style="left:548px;top:623px">Replace With:</div>
<div class="lbl" style="left:548px;top:663px">Search Where:</div>
<div class="a" style="left:548px;top:677px;width:8px;height:1px;background:#333"></div>
<div class="a" style="left:654px;top:578px;width:140px;height:26px;background:#fff;border:1px solid #9a9a9a"></div>
<div class="t" style="left:661px;top:584px;font-size:14.5px;color:#222">getPartNumber</div>
<div class="a" style="left:654px;top:617px;width:140px;height:26px;background:#fff;border:1px solid #9a9a9a"></div>
<div class="a" style="left:654px;top:656px;width:140px;height:28px;background:#fff;border:1px solid #9a9a9a"></div>
<div class="t" style="left:660px;top:663px;font-size:14.5px;color:#222">Current docume</div>
<svg class="a" style="left:776px;top:666px" width="10" height="7"><path d="M1 1 L5 5 L9 1" stroke="#555" fill="none" stroke-width="1.3"/></svg>
<div class="btn" style="left:808px;top:580px;width:131px;height:25px">Find Next</div>
<div class="btn" style="left:808px;top:615px;width:131px;height:25px">Replace</div>
<div class="btn" style="left:808px;top:650px;width:131px;height:25px">Replace &amp; Find</div>
<div class="btn" style="left:808px;top:685px;width:131px;height:25px">Replace All</div>
<div class="cb" style="left:547px;top:720px"></div>
<svg class="a" style="left:549px;top:722px" width="14" height="13"><path d="M2 7 L5.5 10.5 L12 3" stroke="#333" fill="none" stroke-width="1.6"/></svg>
<div class="lbl" style="left:569px;top:722px">Match Case</div>
<div class="cb" style="left:711px;top:720px"></div>
<div class="lbl" style="left:733px;top:722px">Match Regular Expression</div>
<div class="cb" style="left:547px;top:754px"></div>
<div class="lbl" style="left:569px;top:756px">Match Whole Word</div>
<div class="cb" style="left:711px;top:754px;border-color:#c8c8c8;background:#d8d8d8"></div>
<svg class="a" style="left:713px;top:756px" width="14" height="13"><path d="M2 7 L5.5 10.5 L12 3" stroke="#eee" fill="none" stroke-width="1.6"/></svg>
<div class="lbl" style="left:733px;top:756px">Clear Old Results</div>
</div>

<!-- INDESIGN -->
<div id="id">
<div class="a" style="left:960px;top:0;width:960px;height:1002px;background:#535353"></div>
<div class="a" style="left:960px;top:0;width:960px;height:1px;background:#4a4a4a"></div>
<div class="a" style="left:961px;top:0;width:5px;height:1002px;background:#4b4b4b"></div>
<!-- logo -->
<svg class="a" style="left:980px;top:8px" width="40" height="38"><g fill="#bf3b72"><rect x="5" y="3" width="6" height="30" rx="1"/><rect x="29" y="3" width="6" height="30" rx="1"/></g><ellipse cx="25" cy="22" rx="6.5" ry="9.3" fill="none" stroke="#bf3b72" stroke-width="5.2"/></svg>
<div class="a" style="left:1064px;top:17px;width:25px;height:25px;background:#c9c9c9"></div>
<div class="t" style="left:1067px;top:22px;font-size:16px;font-weight:bold;color:#444">Br</div>
<div class="a" style="left:1118px;top:17px;width:25px;height:25px;background:#c9c9c9"></div>
<div class="t" style="left:1121px;top:22px;font-size:16px;font-weight:bold;color:#444">St</div>
<div class="t" style="left:1168px;top:21px;font-size:18px;font-weight:bold;color:#f4f4f4">100%</div>
<svg class="a" style="left:1255px;top:26px" width="14" height="9"><path d="M1 1.5 L7 7 L13 1.5" stroke="#c8c8c8" fill="none" stroke-width="1.3"/></svg>
<div class="a" style="left:1285px;top:9px;width:1px;height:36px;background:#4a4a4a"></div>
<svg class="a" style="left:1301px;top:18px" width="30" height="24"><rect x="9" y="8" width="19" height="14" fill="#c8c8c8"/><path d="M9 1 V8 M1 8 H9 M13 1 V4 M18 1 V4 M23 1 V4 M27 1 V4 M1 12 H5 M1 16 H5 M1 21 H5" stroke="#c8c8c8" stroke-width="1.6"/></svg>
<svg class="a" style="left:1338px;top:25px" width="14" height="9"><path d="M1 1.5 L7 7 L13 1.5" stroke="#c8c8c8" fill="none" stroke-width="1.3"/></svg>
<svg class="a" style="left:1374px;top:18px" width="27" height="23"><rect x="4" y="4" width="19" height="15" fill="#c8c8c8"/><path d="M1 5 V1 H5 M22 1 H26 V5 M26 18 V22 H22 M5 22 H1 V18" stroke="#c8c8c8" fill="none" stroke-width="1.6"/></svg>
<div class="a" style="left:1419px;top:11px;width:2px;height:34px;background:#4b4b4b"></div>
<div class="t" style="left:1437px;top:19px;font-size:18.5px;color:#e4e4e4">Book</div>
<svg class="a" style="left:1491px;top:27px" width="14" height="10"><path d="M1.5 1.5 L7 7.5 L12.5 1.5" stroke="#e0e0e0" fill="none" stroke-width="2.4"/></svg>
<div class="a" style="left:1523px;top:11px;width:2px;height:34px;background:#4b4b4b"></div>
<div class="a" style="left:1538px;top:13px;width:195px;height:31px;background:#454545;border:1px solid #656565;border-radius:4px"></div>
<svg class="a" style="left:1544px;top:19px" width="30" height="20"><circle cx="11" cy="8" r="5.5" stroke="#c8c8c8" fill="none" stroke-width="1.6"/><path d="M7 12 L2 18" stroke="#c8c8c8" stroke-width="2"/><path d="M17 12 H26 L21.5 17 Z" fill="#c8c8c8"/></svg>
<div class="t" style="left:1576px;top:21px;font-size:16px;color:#9a9a9a;transform:scaleX(0.88);transform-origin:0 0">Adobe Stock</div>
<!-- window controls -->
<div class="a" style="left:1755px;top:-3px;width:154px;height:31px;border:1px solid #5f5f5f;border-radius:0 0 4px 4px"></div>
<div class="a" style="left:1797px;top:0;width:1px;height:28px;background:#5c5c5c"></div>
<div class="a" style="left:1838px;top:0;width:1px;height:28px;background:#5c5c5c"></div>
<div class="a" style="left:1769px;top:17px;width:15px;height:5px;background:#c8c8c8"></div>
<div class="a" style="left:1811px;top:10px;width:15px;height:12px;border:3px solid #c8c8c8"></div>
<svg class="a" style="left:1866px;top:8px" width="17" height="14"><path d="M2 1 L15 13 M15 1 L2 13" stroke="#c8c8c8" stroke-width="3"/></svg>

<!-- menubar -->
<div class="a" style="left:966px;top:56px;width:948px;height:2px;background:#5e5e5e"></div>
<div class="a" style="left:966px;top:93px;width:948px;height:1px;background:#464646"></div>
<div class="mi" style="left:978px;top:66px">File</div>
<div class="mi" style="left:1031px;top:66px">Edit</div>
<div class="mi" style="left:1086px;top:66px">Layout</div>
<div class="mi" style="left:1165px;top:66px">Type</div>
<div class="mi" style="left:1229px;top:66px">Object</div>
<div class="mi" style="left:1307px;top:66px">Table</div>
<div class="mi" style="left:1376px;top:66px">View</div>
<div class="mi" style="left:1441px;top:66px">Window</div>
<div class="mi" style="left:1533px;top:66px">Help</div>

<!-- control panel -->
<div class="a" style="left:966px;top:94px;width:948px;height:89px;background:#535353;border-top:1px solid #5c5c5c;border-left:1px solid #5c5c5c;border-right:1px solid #4e4e4e"></div>
<div class="a" style="left:975px;top:125px;width:2px;height:30px;background:repeating-linear-gradient(#3f3f3f 0 2px,transparent 2px 4px)"></div>
<svg class="a" style="left:1007px;top:120px" width="40" height="40"><g fill="none" stroke="#d4d4d4" stroke-width="1.2"><rect x="15" y="1.5" width="8" height="8"/><rect x="29" y="1.5" width="8" height="8"/><rect x="1.5" y="15" width="8" height="8"/><rect x="15" y="15" width="8" height="8"/><rect x="29" y="15" width="8" height="8"/><rect x="1.5" y="29" width="8" height="8"/><rect x="15" y="29" width="8" height="8"/><rect x="29" y="29" width="8" height="8"/><path d="M9.5 5.5 H15 M23 5.5 H29 M5.5 9.5 V15 M33 9.5 V15 M5.5 23 V29 M33 23 V29 M9.5 33 H15 M23 33 H29"/></g><rect x="1" y="1" width="9.5" height="9.5" fill="#f4f4f4"/></svg>
<div class="t" style="left:1063px;top:112px;font-size:16px;color:#e0e0e0">X:</div>
<div class="t" style="left:1063px;top:151px;font-size:16px;color:#e0e0e0">Y:</div>
<div class="a" style="left:1084px;top:105px;width:128px;height:31px;background:#575757;border-radius:3px"></div>
<div class="a" style="left:1084px;top:105px;width:24px;height:31px;background:#5c5c5c;border-radius:3px 0 0 3px"></div>
<svg class="a" style="left:1089px;top:108px" width="14" height="26"><path d="M2 7 L7 2.5 L12 7 M2 19 L7 23.5 L12 19" stroke="#8c8c8c" fill="none" stroke-width="1.1"/></svg>
<div class="t" style="left:1115px;top:112px;font-size:16px;color:#a6a6a6">-33 mm</div>
<div class="a" style="left:1084px;top:144px;width:128px;height:31px;background:#575757;border-radius:3px"></div>
<div class="a" style="left:1084px;top:144px;width:24px;height:31px;background:#5c5c5c;border-radius:3px 0 0 3px"></div>
<svg class="a" style="left:1089px;top:147px" width="14" height="26"><path d="M2 7 L7 2.5 L12 7 M2 19 L7 23.5 L12 19" stroke="#8c8c8c" fill="none" stroke-width="1.1"/></svg>
<div class="t" style="left:1231px;top:112px;font-size:16px;color:#e0e0e0">W:</div>
<div class="a" style="left:1253px;top:105px;width:130px;height:31px;background:#575757;border-radius:3px"></div>
<div class="a" style="left:1253px;top:105px;width:24px;height:31px;background:#5c5c5c;border-radius:3px 0 0 3px"></div>
<svg class="a" style="left:1258px;top:108px" width="14" height="26"><path d="M2 7 L7 2.5 L12 7 M2 19 L7 23.5 L12 19" stroke="#8c8c8c" fill="none" stroke-width="1.1"/></svg>
<div class="a" style="left:1253px;top:144px;width:130px;height:31px;background:#575757;border-radius:3px"></div>
<svg class="a" style="left:1398px;top:125px" width="24" height="24"><rect x="7" y="2" width="8" height="19" rx="4" stroke="#c8c8c8" fill="none" stroke-width="2.4"/><path d="M2 3 L21 21" stroke="#535353" stroke-width="4"/><path d="M2 3 L21 21" stroke="#c8c8c8" stroke-width="2"/></svg>
<svg class="a" style="left:1840px;top:125px" width="17" height="27"><path d="M9 1 L3 13 L9 13 L6 26 L15 10 L9 10 L12 1 Z" fill="#c8c8c8"/></svg>
<div class="a" style="left:1871px;top:106px;width:1px;height:47px;background:#4c4c4c"></div>
<svg class="a" style="left:1885px;top:111px" width="17" height="17"><g fill="#c8c8c8"><circle cx="8.5" cy="8.5" r="5.5"/><rect x="7" y="0" width="3" height="17"/><rect x="0" y="7" width="17" height="3"/><rect x="7" y="0" width="3" height="17" transform="rotate(45 8.5 8.5)"/><rect x="7" y="0" width="3" height="17" transform="rotate(-45 8.5 8.5)"/></g><circle cx="8.5" cy="8.5" r="2.3" fill="#535353"/></svg>

<!-- tools panel -->
<div class="a" style="left:967px;top:184px;width:107px;height:818px;background:#535353;border-left:1px solid #4a4a4a"></div>
<div class="a" style="left:967px;top:184px;width:107px;height:18px;background:#434343"></div>
<svg class="a" style="left:975px;top:190px" width="12" height="8"><path d="M5 1 L1.5 4 L5 7 M10.5 1 L7 4 L10.5 7" stroke="#d0d0d0" fill="none" stroke-width="1.5"/></svg>
<div class="a" style="left:1004px;top:209px;width:30px;height:6px;background:repeating-linear-gradient(90deg,#3a3a3a 0 1px,transparent 1px 3px)"></div>
<div class="a" style="left:1073px;top:184px;width:4px;height:818px;background:#3c3c3c"></div>
<div class="a" style="left:967px;top:814px;width:107px;height:1px;background:#444"></div>
<div class="a" style="left:977px;top:227px;width:42px;height:32px;background:#2e2e2e;border-radius:3px"></div>

<svg class="a" style="left:989px;top:231px" width="20" height="26"><path d="M2 2 L18 15 L10 15 L2 24 Z" fill="none" stroke="#cfcfcf" stroke-width="2"/></svg>
<svg class="a" style="left:1034px;top:231px" width="20" height="26"><path d="M1 1 L19 15 L10 15 L1 25 Z" fill="#cfcfcf"/></svg>
<svg class="a" style="left:987px;top:265px" width="26" height="27"><path d="M2 1.5 H11 L16 6.5 V12 M16 23 H2 V1.5" fill="none" stroke="#cfcfcf" stroke-width="1.8"/><path d="M11 1.5 V6.5 H16" fill="none" stroke="#cfcfcf" stroke-width="1.5"/><path d="M14 12 L25 19 L19 19 L14 26 Z" fill="#cfcfcf"/></svg>
<svg class="a" style="left:1029px;top:266px" width="28" height="24"><path d="M2 1 V23 M26 1 V23 M5 12 H23" stroke="#cfcfcf" stroke-width="2.2"/><path d="M5 12 L10 7 V17 Z M23 12 L18 7 V17 Z" fill="#cfcfcf"/></svg>
<svg class="a" style="left:986px;top:301px" width="24" height="27"><path d="M2 10 V25 H22 V10" fill="none" stroke="#cfcfcf" stroke-width="2.4"/><path d="M6 18 h3 v3 h-3z M11 18 h3 v3 h-3z M16 18 h3 v3 h-3z M8 14 h3 v3 h-3z M13 14 h3 v3 h-3z" fill="#cfcfcf"/><path d="M9 1 L15 8 M15 3 V8 H10" stroke="#cfcfcf" fill="none" stroke-width="2"/></svg>
<svg class="a" style="left:1031px;top:301px" width="24" height="27"><path d="M2 10 V25 H22 V10" fill="none" stroke="#cfcfcf" stroke-width="2.4"/><path d="M6 18 h3 v3 h-3z M11 18 h3 v3 h-3z M16 18 h3 v3 h-3z M8 14 h3 v3 h-3z M13 14 h3 v3 h-3z" fill="#cfcfcf"/><path d="M13 9 L20 2 M14 2 H20 V8" stroke="#cfcfcf" fill="none" stroke-width="2"/></svg>
<svg class="a" style="left:986px;top:344px" width="32" height="28"><path d="M1 2 H22 V8 H19 V5 H14 V19 H17 V22 H6 V19 H9 V5 H4 V8 H1 Z" fill="#cfcfcf"/><path d="M25 27 L31 21 V27 Z" fill="#cfcfcf"/></svg>
<svg class="a" style="left:1030px;top:344px" width="25" height="25"><path d="M2 23 L23 2" stroke="#cfcfcf" stroke-width="2.2"/></svg>
<svg class="a" style="left:984px;top:379px" width="34" height="28"><path d="M1.8 23.5 L6.5 8.8 L13.3 5.6 L19.6 12.3 L17.5 19.4 L3.4 25.2 Z" fill="#cfcfcf"/><path d="M14.8 4.3 L17.7 0.8 L24.8 7.9 L21.4 11.2 Z" fill="#cfcfcf"/><path d="M2.6 24.3 L9.6 15.6" stroke="#535353" stroke-width="1.3"/><circle cx="9.8" cy="15.2" r="1.4" fill="#535353"/><path d="M27 27 L33 21 V27 Z" fill="#cfcfcf"/></svg>
<svg class="a" style="left:1029px;top:379px" width="34" height="28"><path d="M20 3 L25 8 L9 24 L2 26 L4 19 Z" fill="#cfcfcf"/><path d="M4 24 L6 19 L9 22 Z" fill="#535353"/><path d="M17 6 L22 11" stroke="#535353" stroke-width="1.4"/><path d="M27 27 L33 21 V27 Z" fill="#cfcfcf"/></svg>
<svg class="a" style="left:984px;top:416px" width="34" height="30"><rect x="1.5" y="1.5" width="24" height="20" fill="none" stroke="#cfcfcf" stroke-width="2"/><path d="M2 2 L25 21 M25 2 L2 21" stroke="#cfcfcf" stroke-width="1.8"/><path d="M27 29 L33 23 V29 Z" fill="#cfcfcf"/></svg>
<svg class="a" style="left:1029px;top:416px" width="34" height="30"><rect x="1.5" y="1.5" width="24" height="20" fill="#6a6a6a" stroke="#cfcfcf" stroke-width="2"/><path d="M27 29 L33 23 V29 Z" fill="#cfcfcf"/></svg>
<svg class="a" style="left:983px;top:455px" width="30" height="27"><circle cx="23" cy="5.5" r="4" fill="none" stroke="#cfcfcf" stroke-width="2"/><circle cx="23" cy="20.5" r="4" fill="none" stroke="#cfcfcf" stroke-width="2"/><path d="M1 5 L20 16 M1 21 L20 9" stroke="#cfcfcf" stroke-width="3"/></svg>
<svg class="a" style="left:1029px;top:454px" width="34" height="30"><path d="M5 6 H14 M11 3 L14 6 L11 9" stroke="#cfcfcf" fill="none" stroke-width="1.8"/><path d="M1.5 12 H9 V25 H1.5 Z" fill="none" stroke="#cfcfcf" stroke-width="2"/><path d="M9 25 L16 12 H26 L19 25 Z" fill="#cfcfcf"/><path d="M27 29 L33 23 V29 Z" fill="#cfcfcf"/></svg>
<svg class="a" style="left:984px;top:493px" width="26" height="23"><defs><linearGradient id="gg" x1="0" x2="1"><stop offset="0" stop-color="#bdbdbd"/><stop offset="1" stop-color="#3c3c3c"/></linearGradient></defs><rect x="1.5" y="1.5" width="23" height="20" fill="url(#gg)" stroke="#cfcfcf" stroke-width="2"/></svg>
<svg class="a" style="left:1029px;top:493px" width="26" height="23"><rect x="1.5" y="1.5" width="23" height="20" fill="#9a9a9a" stroke="#cfcfcf" stroke-width="2"/><path d="M3 3 h3 v3 h-3z M9 3 h3 v3 h-3z M15 3 h3 v3 h-3z M6 6 h3 v3 h-3z M12 6 h3 v3 h-3z M18 6 h3 v3 h-3z M3 9 h3 v3 h-3z M9 9 h3 v3 h-3z M15 9 h3 v3 h-3z" fill="#505050"/><rect x="3" y="14" width="20" height="6" fill="#c0c0c0"/></svg>
<svg class="a" style="left:986px;top:533px" width="24" height="24"><path d="M1 1 H21 V15 L15 21 H1 Z" fill="#cfcfcf"/><path d="M5 6 H17 M5 10 H17 M5 14 H12" stroke="#535353" stroke-width="1.8"/><path d="M15 21 V15 H21" fill="#535353"/></svg>
<svg class="a" style="left:1029px;top:531px" width="34" height="30"><g transform="translate(13 17.3) rotate(45)"><rect x="-2.4" y="-8" width="4.8" height="17" rx="2.4" fill="none" stroke="#cfcfcf" stroke-width="1.6"/></g><g transform="translate(21.3 9) rotate(45)"><rect x="-4" y="-2" width="8" height="4.5" fill="#cfcfcf"/></g><g transform="translate(24.2 5.2) rotate(45)"><rect x="-2.6" y="-4.5" width="5.2" height="7" rx="2.6" fill="#cfcfcf"/></g><path d="M27 29 L33 23 V29 Z" fill="#cfcfcf"/></svg>
<svg class="a" style="left:984px;top:567px" width="28" height="28"><g stroke="#cfcfcf" stroke-linecap="round" stroke-width="3"><path d="M9 4.5 L10.5 15 M13.9 2.8 L14 14 M18.5 4.5 L17.8 14 M23.6 9 L21.3 15"/><path d="M3.3 13 L9 18.5" stroke-width="3.4"/></g><path d="M8.5 13 L23 13 L21.8 20 L17.5 25.5 L11 25.5 L6 18.5 Z" fill="#cfcfcf"/></svg>
<svg class="a" style="left:1029px;top:567px" width="27" height="28"><circle cx="10.5" cy="10.5" r="8" fill="none" stroke="#cfcfcf" stroke-width="2.2"/><path d="M16 16 L25 25" stroke="#cfcfcf" stroke-width="3.5"/></svg>
<!-- fill/stroke -->
<svg class="a" style="left:1047px;top:608px" width="19" height="18"><path d="M3 3 H9 M12 8 V15" stroke="#cfcfcf" stroke-width="2" fill="none"/><path d="M1 3 L5 0 V6 Z M12 17 L9 12 H15 Z" fill="#cfcfcf"/><path d="M5 3 Q12 3 12 10" stroke="#cfcfcf" stroke-width="2" fill="none"/></svg>
<div class="a" style="left:981px;top:607px;width:53px;height:53px;background:#ffca3a;border:1px solid #e8e8e8"></div>
<div class="a" style="left:1009px;top:636px;width:51px;height:50px;background:#130d0b"></div>
<div class="a" style="left:1024px;top:649px;width:22px;height:23px;background:#575757"></div>
<svg class="a" style="left:981px;top:667px" width="19" height="17"><rect x="6" y="6" width="11" height="10" fill="#222" stroke="#cfcfcf" stroke-width="1.4"/><rect x="1" y="1" width="11" height="10" fill="#fff" stroke="#cfcfcf" stroke-width="1"/><path d="M1.5 10.5 L11.5 1.5" stroke="#e02020" stroke-width="2"/></svg>
<div class="a" style="left:989px;top:700px;width:27px;height:24px;background:#2e2e2e;border-radius:3px"></div>
<div class="a" style="left:996px;top:706px;width:13px;height:12px;border:2px solid #cfcfcf"></div>
<div class="t" style="left:1030px;top:704px;font-size:18px;font-weight:bold;color:#cfcfcf;font-family:'Liberation Serif',serif">T</div>
<div class="a" style="left:977px;top:735px;width:27px;height:27px;background:#2e2e2e;border-radius:3px"></div>
<div class="a" style="left:981px;top:739px;width:19px;height:19px;background:#130d0b;border:1px solid #d8d8d8"></div>
<div class="a" style="left:1011px;top:739px;width:18px;height:18px;background:linear-gradient(90deg,#0e3f78,#2d7fc6);border:1px solid #888"></div>
<svg class="a" style="left:1041px;top:739px" width="24" height="24"><rect x="0.5" y="0.5" width="17" height="18" fill="#fff" stroke="#aaa"/><path d="M2 17 L16 2" stroke="#e81c1c" stroke-width="2.4"/><path d="M18 23 L23 18 V23 Z" fill="#cfcfcf"/></svg>
<div class="a" style="left:977px;top:773px;width:42px;height:32px;background:#2e2e2e;border-radius:3px"></div>
<svg class="a" style="left:988px;top:780px" width="20" height="18"><rect x="1" y="1" width="17" height="16" fill="none" stroke="#cfcfcf" stroke-width="1.6"/><rect x="4" y="5" width="7" height="5" fill="none" stroke="#cfcfcf" stroke-width="1.4"/><rect x="8" y="8" width="7" height="5" fill="none" stroke="#cfcfcf" stroke-width="1.4"/></svg>
<svg class="a" style="left:1034px;top:780px" width="30" height="30"><rect x="1" y="1" width="18" height="17" fill="#6a6a6a" stroke="#cfcfcf" stroke-width="1.8"/><rect x="1" y="1" width="18" height="4" fill="#cfcfcf"/><path d="M22 29 L28 23 V29 Z" fill="#cfcfcf"/></svg>


<!-- document area -->
<div class="a" style="left:1077px;top:185px;width:40px;height:43px;background:#535353"></div>
<div class="a" style="left:1077px;top:184px;width:40px;height:1px;background:#464646"></div>
<div class="t" style="left:1098px;top:200px;font-size:16px;font-weight:bold;color:#ececec">Al</div>
<div class="a" style="left:1077px;top:228px;width:36px;height:774px;background:#1f1f1f"></div>
<div class="a" style="left:1102px;top:253px;width:266px;height:749px;background:#fff"></div>
<div class="a" style="left:1356px;top:253px;width:12px;height:749px;background:linear-gradient(90deg,#fff,#ececec)"></div>
<div class="a" style="left:1077px;top:252px;width:25px;height:1px;background:#7a7a7a"></div>
<div class="a" style="left:1101px;top:228px;width:1px;height:25px;background:#8a8a8a"></div>
<div class="t" style="left:1101px;top:230px;font-size:14px;color:#f0f0f0">40</div>
<div class="a" style="left:1098px;top:255.7px;width:3px;height:1px;background:#bdbdbd"></div>
<div class="a" style="left:1077px;top:260.4px;width:25px;height:1px;background:#bdbdbd"></div>
<div class="a" style="left:1098px;top:265.1px;width:3px;height:1px;background:#bdbdbd"></div>
<div class="a" style="left:1098px;top:269.8px;width:3px;height:1px;background:#bdbdbd"></div>
<div class="a" style="left:1098px;top:274.5px;width:3px;height:1px;background:#bdbdbd"></div>
<div class="a" style="left:1098px;top:279.3px;width:3px;height:1px;background:#bdbdbd"></div>
<div class="a" style="left:1094px;top:284.0px;width:7px;height:1px;background:#bdbdbd"></div>
<div class="a" style="left:1098px;top:288.7px;width:3px;height:1px;background:#bdbdbd"></div>
<div class="a" style="left:1098px;top:293.4px;width:3px;height:1px;background:#bdbdbd"></div>
<div class="a" style="left:1098px;top:298.1px;width:3px;height:1px;background:#bdbdbd"></div>
<div class="a" style="left:1098px;top:302.8px;width:3px;height:1px;background:#bdbdbd"></div>
<div class="t" style="left:1080px;top:263.4px;font-size:14.5px;color:#d8d8d8">1</div>
<div class="t" style="left:1080px;top:277.1px;font-size:14.5px;color:#d8d8d8">4</div>
<div class="t" style="left:1080px;top:290.8px;font-size:14.5px;color:#d8d8d8">0</div>
<div class="a" style="left:1077px;top:307.5px;width:25px;height:1px;background:#bdbdbd"></div>
<div class="a" style="left:1098px;top:312.3px;width:3px;height:1px;background:#bdbdbd"></div>
<div class="a" style="left:1098px;top:317.0px;width:3px;height:1px;background:#bdbdbd"></div>
<div class="a" style="left:1098px;top:321.7px;width:3px;height:1px;background:#bdbdbd"></div>
<div class="a" style="left:1098px;top:326.4px;width:3px;height:1px;background:#bdbdbd"></div>
<div class="a" style="left:1094px;top:331.1px;width:7px;height:1px;background:#bdbdbd"></div>
<div class="a" style="left:1098px;top:335.8px;width:3px;height:1px;background:#bdbdbd"></div>
<div class="a" style="left:1098px;top:340.6px;width:3px;height:1px;background:#bdbdbd"></div>
<div class="a" style="left:1098px;top:345.3px;width:3px;height:1px;background:#bdbdbd"></div>
<div class="a" style="left:1098px;top:350.0px;width:3px;height:1px;background:#bdbdbd"></div>
<div class="t" style="left:1080px;top:310.5px;font-size:14.5px;color:#d8d8d8">1</div>
<div class="t" style="left:1080px;top:324.2px;font-size:14.5px;color:#d8d8d8">5</div>
<div class="t" style="left:1080px;top:337.9px;font-size:14.5px;color:#d8d8d8">0</div>
<div class="a" style="left:1077px;top:354.7px;width:25px;height:1px;background:#bdbdbd"></div>
<div class="a" style="left:1098px;top:359.4px;width:3px;height:1px;background:#bdbdbd"></div>
<div class="a" style="left:1098px;top:364.1px;width:3px;height:1px;background:#bdbdbd"></div>
<div class="a" style="left:1098px;top:368.8px;width:3px;height:1px;background:#bdbdbd"></div>
<div class="a" style="left:1098px;top:373.6px;width:3px;height:1px;background:#bdbdbd"></div>
<div class="a" style="left:1094px;top:378.3px;width:7px;height:1px;background:#bdbdbd"></div>
<div class="a" style="left:1098px;top:383.0px;width:3px;height:1px;background:#bdbdbd"></div>
<div class="a" style="left:1098px;top:387.7px;width:3px;height:1px;background:#bdbdbd"></div>
<div class="a" style="left:1098px;top:392.4px;width:3px;height:1px;background:#bdbdbd"></div>
<div class="a" style="left:1098px;top:397.1px;width:3px;height:1px;background:#bdbdbd"></div>
<div class="t" style="left:1080px;top:357.7px;font-size:14.5px;color:#d8d8d8">1</div>
<div class="t" style="left:1080px;top:371.4px;font-size:14.5px;color:#d8d8d8">6</div>
<div class="t" style="left:1080px;top:385.1px;font-size:14.5px;color:#d8d8d8">0</div>
<div class="a" style="left:1077px;top:401.8px;width:25px;height:1px;background:#bdbdbd"></div>
<div class="a" style="left:1098px;top:406.6px;width:3px;height:1px;background:#bdbdbd"></div>
<div class="a" style="left:1098px;top:411.3px;width:3px;height:1px;background:#bdbdbd"></div>
<div class="a" style="left:1098px;top:416.0px;width:3px;height:1px;background:#bdbdbd"></div>
<div class="a" style="left:1098px;top:420.7px;width:3px;height:1px;background:#bdbdbd"></div>
<div class="a" style="left:1094px;top:425.4px;width:7px;height:1px;background:#bdbdbd"></div>
<div class="a" style="left:1098px;top:430.1px;width:3px;height:1px;background:#bdbdbd"></div>
<div class="a" style="left:1098px;top:434.9px;width:3px;height:1px;background:#bdbdbd"></div>
<div class="a" style="left:1098px;top:439.6px;width:3px;height:1px;background:#bdbdbd"></div>
<div class="a" style="left:1098px;top:444.3px;width:3px;height:1px;background:#bdbdbd"></div>
<div class="t" style="left:1080px;top:404.8px;font-size:14.5px;color:#d8d8d8">1</div>
<div class="t" style="left:1080px;top:418.5px;font-size:14.5px;color:#d8d8d8">7</div>
<div class="t" style="left:1080px;top:432.2px;font-size:14.5px;color:#d8d8d8">0</div>
<div class="a" style="left:1077px;top:449.0px;width:25px;height:1px;background:#bdbdbd"></div>
<div class="a" style="left:1098px;top:453.7px;width:3px;height:1px;background:#bdbdbd"></div>
<div class="a" style="left:1098px;top:458.4px;width:3px;height:1px;background:#bdbdbd"></div>
<div class="a" style="left:1098px;top:463.1px;width:3px;height:1px;background:#bdbdbd"></div>
<div class="a" style="left:1098px;top:467.9px;width:3px;height:1px;background:#bdbdbd"></div>
<div class="a" style="left:1094px;top:472.6px;width:7px;height:1px;background:#bdbdbd"></div>
<div class="a" style="left:1098px;top:477.3px;width:3px;height:1px;background:#bdbdbd"></div>
<div class="a" style="left:1098px;top:482.0px;width:3px;height:1px;background:#bdbdbd"></div>
<div class="a" style="left:1098px;top:486.7px;width:3px;height:1px;background:#bdbdbd"></div>
<div class="a" style="left:1098px;top:491.4px;width:3px;height:1px;background:#bdbdbd"></div>
<div class="t" style="left:1080px;top:452.0px;font-size:14.5px;color:#d8d8d8">1</div>
<div class="t" style="left:1080px;top:465.7px;font-size:14.5px;color:#d8d8d8">8</div>
<div class="t" style="left:1080px;top:479.4px;font-size:14.5px;color:#d8d8d8">0</div>
<div class="a" style="left:1077px;top:496.1px;width:25px;height:1px;background:#bdbdbd"></div>
<div class="a" style="left:1098px;top:500.9px;width:3px;height:1px;background:#bdbdbd"></div>
<div class="a" style="left:1098px;top:505.6px;width:3px;height:1px;background:#bdbdbd"></div>
<div class="a" style="left:1098px;top:510.3px;width:3px;height:1px;background:#bdbdbd"></div>
<div class="a" style="left:1098px;top:515.0px;width:3px;height:1px;background:#bdbdbd"></div>
<div class="a" style="left:1094px;top:519.7px;width:7px;height:1px;background:#bdbdbd"></div>
<div class="a" style="left:1098px;top:524.4px;width:3px;height:1px;background:#bdbdbd"></div>
<div class="a" style="left:1098px;top:529.2px;width:3px;height:1px;background:#bdbdbd"></div>
<div class="a" style="left:1098px;top:533.9px;width:3px;height:1px;background:#bdbdbd"></div>
<div class="a" style="left:1098px;top:538.6px;width:3px;height:1px;background:#bdbdbd"></div>
<div class="t" style="left:1080px;top:499.1px;font-size:14.5px;color:#d8d8d8">1</div>
<div class="t" style="left:1080px;top:512.9px;font-size:14.5px;color:#d8d8d8">9</div>
<div class="t" style="left:1080px;top:526.5px;font-size:14.5px;color:#d8d8d8">0</div>
<div class="a" style="left:1077px;top:543.3px;width:25px;height:1px;background:#bdbdbd"></div>
<div class="a" style="left:1098px;top:548.0px;width:3px;height:1px;background:#bdbdbd"></div>
<div class="a" style="left:1098px;top:552.7px;width:3px;height:1px;background:#bdbdbd"></div>
<div class="a" style="left:1098px;top:557.4px;width:3px;height:1px;background:#bdbdbd"></div>
<div class="a" style="left:1098px;top:562.2px;width:3px;height:1px;background:#bdbdbd"></div>
<div class="a" style="left:1094px;top:566.9px;width:7px;height:1px;background:#bdbdbd"></div>
<div class="a" style="left:1098px;top:571.6px;width:3px;height:1px;background:#bdbdbd"></div>
<div class="a" style="left:1098px;top:576.3px;width:3px;height:1px;background:#bdbdbd"></div>
<div class="a" style="left:1098px;top:581.0px;width:3px;height:1px;background:#bdbdbd"></div>
<div class="a" style="left:1098px;top:585.7px;width:3px;height:1px;background:#bdbdbd"></div>
<div class="t" style="left:1080px;top:546.3px;font-size:14.5px;color:#d8d8d8">2</div>
<div class="t" style="left:1080px;top:560.0px;font-size:14.5px;color:#d8d8d8">0</div>
<div class="t" style="left:1080px;top:573.7px;font-size:14.5px;color:#d8d8d8">0</div>
<div class="a" style="left:1077px;top:590.5px;width:25px;height:1px;background:#bdbdbd"></div>
<div class="a" style="left:1098px;top:595.2px;width:3px;height:1px;background:#bdbdbd"></div>
<div class="a" style="left:1098px;top:599.9px;width:3px;height:1px;background:#bdbdbd"></div>
<div class="a" style="left:1098px;top:604.6px;width:3px;height:1px;background:#bdbdbd"></div>
<div class="a" style="left:1098px;top:609.3px;width:3px;height:1px;background:#bdbdbd"></div>
<div class="a" style="left:1094px;top:614.0px;width:7px;height:1px;background:#bdbdbd"></div>
<div class="a" style="left:1098px;top:618.7px;width:3px;height:1px;background:#bdbdbd"></div>
<div class="a" style="left:1098px;top:623.5px;width:3px;height:1px;background:#bdbdbd"></div>
<div class="a" style="left:1098px;top:628.2px;width:3px;height:1px;background:#bdbdbd"></div>
<div class="a" style="left:1098px;top:632.9px;width:3px;height:1px;background:#bdbdbd"></div>
<div class="t" style="left:1080px;top:593.5px;font-size:14.5px;color:#d8d8d8">2</div>
<div class="t" style="left:1080px;top:607.2px;font-size:14.5px;color:#d8d8d8">1</div>
<div class="t" style="left:1080px;top:620.9px;font-size:14.5px;color:#d8d8d8">0</div>
<div class="a" style="left:1077px;top:637.6px;width:25px;height:1px;background:#bdbdbd"></div>
<div class="a" style="left:1098px;top:642.3px;width:3px;height:1px;background:#bdbdbd"></div>
<div class="a" style="left:1098px;top:647.0px;width:3px;height:1px;background:#bdbdbd"></div>
<div class="a" style="left:1098px;top:651.7px;width:3px;height:1px;background:#bdbdbd"></div>
<div class="a" style="left:1098px;top:656.5px;width:3px;height:1px;background:#bdbdbd"></div>
<div class="a" style="left:1094px;top:661.2px;width:7px;height:1px;background:#bdbdbd"></div>
<div class="a" style="left:1098px;top:665.9px;width:3px;height:1px;background:#bdbdbd"></div>
<div class="a" style="left:1098px;top:670.6px;width:3px;height:1px;background:#bdbdbd"></div>
<div class="a" style="left:1098px;top:675.3px;width:3px;height:1px;background:#bdbdbd"></div>
<div class="a" style="left:1098px;top:680.0px;width:3px;height:1px;background:#bdbdbd"></div>
<div class="t" style="left:1080px;top:640.6px;font-size:14.5px;color:#d8d8d8">2</div>
<div class="t" style="left:1080px;top:654.3px;font-size:14.5px;color:#d8d8d8">2</div>
<div class="t" style="left:1080px;top:668.0px;font-size:14.5px;color:#d8d8d8">0</div>
<div class="a" style="left:1077px;top:684.8px;width:25px;height:1px;background:#bdbdbd"></div>
<div class="a" style="left:1098px;top:689.5px;width:3px;height:1px;background:#bdbdbd"></div>
<div class="a" style="left:1098px;top:694.2px;width:3px;height:1px;background:#bdbdbd"></div>
<div class="a" style="left:1098px;top:698.9px;width:3px;height:1px;background:#bdbdbd"></div>
<div class="a" style="left:1098px;top:703.6px;width:3px;height:1px;background:#bdbdbd"></div>
<div class="a" style="left:1094px;top:708.3px;width:7px;height:1px;background:#bdbdbd"></div>
<div class="a" style="left:1098px;top:713.0px;width:3px;height:1px;background:#bdbdbd"></div>
<div class="a" style="left:1098px;top:717.8px;width:3px;height:1px;background:#bdbdbd"></div>
<div class="a" style="left:1098px;top:722.5px;width:3px;height:1px;background:#bdbdbd"></div>
<div class="a" style="left:1098px;top:727.2px;width:3px;height:1px;background:#bdbdbd"></div>
<div class="t" style="left:1080px;top:687.8px;font-size:14.5px;color:#d8d8d8">2</div>
<div class="t" style="left:1080px;top:701.5px;font-size:14.5px;color:#d8d8d8">3</div>
<div class="t" style="left:1080px;top:715.1px;font-size:14.5px;color:#d8d8d8">0</div>
<div class="a" style="left:1077px;top:731.9px;width:25px;height:1px;background:#bdbdbd"></div>
<div class="a" style="left:1098px;top:736.6px;width:3px;height:1px;background:#bdbdbd"></div>
<div class="a" style="left:1098px;top:741.3px;width:3px;height:1px;background:#bdbdbd"></div>
<div class="a" style="left:1098px;top:746.0px;width:3px;height:1px;background:#bdbdbd"></div>
<div class="a" style="left:1098px;top:750.8px;width:3px;height:1px;background:#bdbdbd"></div>
<div class="a" style="left:1094px;top:755.5px;width:7px;height:1px;background:#bdbdbd"></div>
<div class="a" style="left:1098px;top:760.2px;width:3px;height:1px;background:#bdbdbd"></div>
<div class="a" style="left:1098px;top:764.9px;width:3px;height:1px;background:#bdbdbd"></div>
<div class="a" style="left:1098px;top:769.6px;width:3px;height:1px;background:#bdbdbd"></div>
<div class="a" style="left:1098px;top:774.3px;width:3px;height:1px;background:#bdbdbd"></div>
<div class="t" style="left:1080px;top:734.9px;font-size:14.5px;color:#d8d8d8">2</div>
<div class="t" style="left:1080px;top:748.6px;font-size:14.5px;color:#d8d8d8">4</div>
<div class="t" style="left:1080px;top:762.3px;font-size:14.5px;color:#d8d8d8">0</div>
<div class="a" style="left:1077px;top:779.0px;width:25px;height:1px;background:#bdbdbd"></div>
<div class="a" style="left:1098px;top:783.8px;width:3px;height:1px;background:#bdbdbd"></div>
<div class="a" style="left:1098px;top:788.5px;width:3px;height:1px;background:#bdbdbd"></div>
<div class="a" style="left:1098px;top:793.2px;width:3px;height:1px;background:#bdbdbd"></div>
<div class="a" style="left:1098px;top:797.9px;width:3px;height:1px;background:#bdbdbd"></div>
<div class="a" style="left:1094px;top:802.6px;width:7px;height:1px;background:#bdbdbd"></div>
<div class="a" style="left:1098px;top:807.3px;width:3px;height:1px;background:#bdbdbd"></div>
<div class="a" style="left:1098px;top:812.1px;width:3px;height:1px;background:#bdbdbd"></div>
<div class="a" style="left:1098px;top:816.8px;width:3px;height:1px;background:#bdbdbd"></div>
<div class="a" style="left:1098px;top:821.5px;width:3px;height:1px;background:#bdbdbd"></div>
<div class="t" style="left:1080px;top:782.0px;font-size:14.5px;color:#d8d8d8">2</div>
<div class="t" style="left:1080px;top:795.8px;font-size:14.5px;color:#d8d8d8">5</div>
<div class="t" style="left:1080px;top:809.4px;font-size:14.5px;color:#d8d8d8">0</div>
<div class="a" style="left:1077px;top:826.2px;width:25px;height:1px;background:#bdbdbd"></div>
<div class="a" style="left:1098px;top:830.9px;width:3px;height:1px;background:#bdbdbd"></div>
<div class="a" style="left:1098px;top:835.6px;width:3px;height:1px;background:#bdbdbd"></div>
<div class="a" style="left:1098px;top:840.3px;width:3px;height:1px;background:#bdbdbd"></div>
<div class="a" style="left:1098px;top:845.1px;width:3px;height:1px;background:#bdbdbd"></div>
<div class="a" style="left:1094px;top:849.8px;width:7px;height:1px;background:#bdbdbd"></div>
<div class="a" style="left:1098px;top:854.5px;width:3px;height:1px;background:#bdbdbd"></div>
<div class="a" style="left:1098px;top:859.2px;width:3px;height:1px;background:#bdbdbd"></div>
<div class="a" style="left:1098px;top:863.9px;width:3px;height:1px;background:#bdbdbd"></div>
<div class="a" style="left:1098px;top:868.6px;width:3px;height:1px;background:#bdbdbd"></div>
<div class="t" style="left:1080px;top:829.2px;font-size:14.5px;color:#d8d8d8">2</div>
<div class="t" style="left:1080px;top:842.9px;font-size:14.5px;color:#d8d8d8">6</div>
<div class="t" style="left:1080px;top:856.6px;font-size:14.5px;color:#d8d8d8">0</div>
<div class="a" style="left:1077px;top:873.3px;width:25px;height:1px;background:#bdbdbd"></div>
<div class="a" style="left:1098px;top:878.1px;width:3px;height:1px;background:#bdbdbd"></div>
<div class="a" style="left:1098px;top:882.8px;width:3px;height:1px;background:#bdbdbd"></div>
<div class="a" style="left:1098px;top:887.5px;width:3px;height:1px;background:#bdbdbd"></div>
<div class="a" style="left:1098px;top:892.2px;width:3px;height:1px;background:#bdbdbd"></div>
<div class="a" style="left:1094px;top:896.9px;width:7px;height:1px;background:#bdbdbd"></div>
<div class="a" style="left:1098px;top:901.6px;width:3px;height:1px;background:#bdbdbd"></div>
<div class="a" style="left:1098px;top:906.4px;width:3px;height:1px;background:#bdbdbd"></div>
<div class="a" style="left:1098px;top:911.1px;width:3px;height:1px;background:#bdbdbd"></div>
<div class="a" style="left:1098px;top:915.8px;width:3px;height:1px;background:#bdbdbd"></div>
<div class="t" style="left:1080px;top:876.3px;font-size:14.5px;color:#d8d8d8">2</div>
<div class="t" style="left:1080px;top:890.0px;font-size:14.5px;color:#d8d8d8">7</div>
<div class="t" style="left:1080px;top:903.7px;font-size:14.5px;color:#d8d8d8">0</div>
<div class="a" style="left:1077px;top:920.5px;width:25px;height:1px;background:#bdbdbd"></div>
<div class="a" style="left:1098px;top:925.2px;width:3px;height:1px;background:#bdbdbd"></div>
<div class="a" style="left:1098px;top:929.9px;width:3px;height:1px;background:#bdbdbd"></div>
<div class="a" style="left:1098px;top:934.6px;width:3px;height:1px;background:#bdbdbd"></div>
<div class="a" style="left:1098px;top:939.4px;width:3px;height:1px;background:#bdbdbd"></div>
<div class="a" style="left:1094px;top:944.1px;width:7px;height:1px;background:#bdbdbd"></div>
<div class="a" style="left:1098px;top:948.8px;width:3px;height:1px;background:#bdbdbd"></div>
<div class="a" style="left:1098px;top:953.5px;width:3px;height:1px;background:#bdbdbd"></div>
<div class="a" style="left:1098px;top:958.2px;width:3px;height:1px;background:#bdbdbd"></div>
<div class="a" style="left:1098px;top:962.9px;width:3px;height:1px;background:#bdbdbd"></div>
<div class="t" style="left:1080px;top:923.5px;font-size:14.5px;color:#d8d8d8">2</div>
<div class="t" style="left:1080px;top:937.2px;font-size:14.5px;color:#d8d8d8">8</div>
<div class="t" style="left:1080px;top:950.9px;font-size:14.5px;color:#d8d8d8">0</div>
<div class="a" style="left:1077px;top:967.6px;width:25px;height:1px;background:#bdbdbd"></div>
<div class="a" style="left:1098px;top:972.4px;width:3px;height:1px;background:#bdbdbd"></div>
<div class="a" style="left:1098px;top:977.1px;width:3px;height:1px;background:#bdbdbd"></div>
<div class="a" style="left:1098px;top:981.8px;width:3px;height:1px;background:#bdbdbd"></div>
<div class="a" style="left:1098px;top:986.5px;width:3px;height:1px;background:#bdbdbd"></div>
<div class="a" style="left:1094px;top:991.2px;width:7px;height:1px;background:#bdbdbd"></div>
<div class="a" style="left:1098px;top:995.9px;width:3px;height:1px;background:#bdbdbd"></div>
<div class="a" style="left:1098px;top:1000.7px;width:3px;height:1px;background:#bdbdbd"></div>
<div class="a" style="left:1098px;top:1005.4px;width:3px;height:1px;background:#bdbdbd"></div>
<div class="a" style="left:1098px;top:1010.1px;width:3px;height:1px;background:#bdbdbd"></div>
<div class="t" style="left:1080px;top:970.6px;font-size:14.5px;color:#d8d8d8">2</div>
<div class="t" style="left:1080px;top:984.4px;font-size:14.5px;color:#d8d8d8">9</div>
<div class="t" style="left:1080px;top:998.0px;font-size:14.5px;color:#d8d8d8">0</div>
<div class="a" style="left:1077px;top:228px;width:24px;height:24px;background:#1f1f1f"></div>
<div class="a" style="left:1079px;top:235px;width:22px;height:1px;background:repeating-linear-gradient(90deg,#888 0 1px,transparent 1px 3px)"></div>
<div class="a" style="left:1084px;top:230px;width:1px;height:21px;background:repeating-linear-gradient(#888 0 1px,transparent 1px 3px)"></div>
<div class="a" style="left:1077px;top:252px;width:25px;height:1px;background:#9a9a9a"></div>
<div class="a" style="left:1261px;top:418px;width:1px;height:584px;background:#ff4d73"></div>
<div class="a" style="left:1285px;top:418px;width:1px;height:583px;background:#3a3a3a"></div>
<div class="a" style="left:1285px;top:1000px;width:83px;height:1px;background:#3a3a3a"></div>
<div class="a" style="left:1345px;top:418px;width:1px;height:523px;background:#9933ff"></div>
<div class="a" style="left:1345px;top:941px;width:23px;height:1px;background:#cc33ff"></div>
<div class="a" style="left:1365px;top:524px;width:4px;height:22px;border:1px solid #3a6ab0;border-right:none;background:#fff"></div>

<!-- floating panel -->
<div class="a" style="left:1113px;top:152px;width:794px;height:20px;background:#424242;border-radius:4px 6px 0 0"></div>
<div class="a" style="left:1113px;top:171px;width:794px;height:2px;background:#363636"></div>
<svg class="a" style="left:1346px;top:159px" width="13" height="9"><path d="M1.5 1 L5 4.5 L1.5 8 M7.5 1 L11 4.5 L7.5 8" stroke="#d0d0d0" fill="none" stroke-width="1.5"/></svg>
<svg class="a" style="left:1862px;top:159px" width="13" height="9"><path d="M5 1 L1.5 4.5 L5 8 M11 1 L7.5 4.5 L11 8" stroke="#d0d0d0" fill="none" stroke-width="1.5"/></svg>
<svg class="a" style="left:1888px;top:158px" width="11" height="11"><path d="M1 1 L10 10 M10 1 L1 10" stroke="#d0d0d0" stroke-width="1.8"/></svg>
<div class="a" style="left:1113px;top:173px;width:254px;height:245px;background:#535353;border-left:1px solid #444;border-right:1px solid #444"></div>
<div class="a" style="left:1225px;top:178.0px;width:30px;height:6px;background:repeating-linear-gradient(90deg,#3a3a3a 0 1px,transparent 1px 3px)"></div>
<div class="t" style="left:1171px;top:201.0px;font-size:16.5px;font-weight:bold;color:#ececec">Index</div>
<div class="a" style="left:1114px;top:234.0px;width:252px;height:1.5px;background:#3c3c3c"></div>
<div class="a" style="left:1225px;top:240.0px;width:30px;height:6px;background:repeating-linear-gradient(90deg,#3a3a3a 0 1px,transparent 1px 3px)"></div>
<div class="t" style="left:1171px;top:263.0px;font-size:16.5px;font-weight:bold;color:#ececec">Conditional Text</div>
<div class="a" style="left:1114px;top:295.5px;width:252px;height:1.5px;background:#3c3c3c"></div>
<div class="a" style="left:1225px;top:301.5px;width:30px;height:6px;background:repeating-linear-gradient(90deg,#3a3a3a 0 1px,transparent 1px 3px)"></div>
<div class="t" style="left:1171px;top:324.5px;font-size:16.5px;font-weight:bold;color:#ececec">Hyperlinks</div>
<div class="a" style="left:1114px;top:357.0px;width:252px;height:1.5px;background:#3c3c3c"></div>
<div class="a" style="left:1225px;top:363.0px;width:30px;height:6px;background:repeating-linear-gradient(90deg,#3a3a3a 0 1px,transparent 1px 3px)"></div>
<div class="t" style="left:1171px;top:386.0px;font-size:16.5px;font-weight:bold;color:#ececec;transform:scaleX(0.95);transform-origin:0 0">Bookmarks</div>
<svg class="a" style="left:1132px;top:197px" width="25" height="25"><path d="M1 2 H13 M5 6 H24 M5 10 H24 M1 14 H13 M5 18 H24 M5 22 H24" stroke="#cfcfcf" stroke-width="2.2"/></svg>
<svg class="a" style="left:1133px;top:257px" width="23" height="29"><path d="M1 1 H22 V7 H19 V4 H14 V19 H17 V22 H6 V19 H9 V4 H4 V7 H1 Z" fill="#cfcfcf"/><path d="M1 24 L4.5 27 L8 24 L11.5 27 L15 24 L18.5 27 L22 24" stroke="#cfcfcf" fill="none" stroke-width="1.6"/></svg>
<svg class="a" style="left:1130px;top:318px" width="30" height="30"><circle cx="11" cy="11" r="10" fill="#cfcfcf"/><path d="M5 6 Q9 9 7 13 Q11 15 10 19 M13 3 Q15 8 19 8" stroke="#535353" fill="none" stroke-width="1.6"/><path d="M17 14 V25 Q18 29 23 29 Q28 29 28 24 V19 Q28 17 26 17 V21 V16 Q24 15 23 16 V20 V13 Q21 12 20 14 V20 V11 Q18 10 17 12 Z" fill="#cfcfcf" stroke="#535353" stroke-width="1.2"/></svg>
<svg class="a" style="left:1137px;top:380px" width="16" height="27"><path d="M1 1 H15 V26 L8 19 L1 26 Z" fill="#cfcfcf"/></svg>
<div class="a" style="left:1366px;top:173px;width:4px;height:245px;background:#3c3c3c"></div>
<div class="a" style="left:1368px;top:418px;width:2px;height:584px;background:#3c3c3c"></div>

<!-- pages panel -->
<div class="a" style="left:1370px;top:173px;width:537px;height:740px;background:#535353"></div>
<div class="a" style="left:1370px;top:173px;width:537px;height:40px;background:#444"></div>
<div class="a" style="left:1370px;top:173px;width:91px;height:41px;background:#535353"></div>
<div class="a" style="left:1461px;top:173px;width:1px;height:40px;background:#3c3c3c"></div>
<div class="a" style="left:1547px;top:173px;width:1px;height:40px;background:#3c3c3c"></div>
<div class="a" style="left:1625px;top:173px;width:1px;height:40px;background:#3c3c3c"></div>
<svg class="a" style="left:1381px;top:189px" width="9" height="14"><path d="M1.5 5.5 L4.5 1.5 L7.5 5.5 M1.5 8.5 L4.5 12.5 L7.5 8.5" stroke="#c8c8c8" fill="none" stroke-width="1.5"/></svg>
<div class="ptab" style="left:1397px;top:188px;color:#f2f2f2">Pages</div>
<div class="ptab" style="left:1480px;top:188px;transform:scaleX(0.93);transform-origin:0 0">Layers</div>
<div class="ptab" style="left:1567px;top:188px;transform:scaleX(0.94);transform-origin:0 0">Links</div>
<div class="a" style="left:1882px;top:188px;width:16px;height:12px;background:repeating-linear-gradient(#c8c8c8 0 2px,transparent 2px 3.5px)"></div>
<div class="t" style="left:1375px;top:226px;font-size:16px;color:#ececec">[None]</div>
<div class="t" style="left:1375px;top:269px;font-size:16px;color:#ececec;transform:scaleX(0.9);transform-origin:0 0">A-Gabarit</div>
<div class="a" style="left:1849px;top:220px;width:25px;height:35px;background:#fff"></div>
<div class="a" style="left:1849px;top:264px;width:25px;height:26px;background:#fff"></div>
<div class="a" style="left:1888px;top:214px;width:18px;height:79px;background:#4e4e4e"></div>
<svg class="a" style="left:1890px;top:221px" width="14" height="8"><path d="M2 6.5 L7 2 L12 6.5" stroke="#777" fill="none" stroke-width="1.2"/></svg>
<svg class="a" style="left:1890px;top:276px" width="14" height="8"><path d="M2 1.5 L7 6 L12 1.5" stroke="#777" fill="none" stroke-width="1.2"/></svg>
<div class="a" style="left:1370px;top:292px;width:537px;height:2px;background:#606060"></div>
<div class="a" style="left:1888px;top:296px;width:18px;height:577px;background:#4e4e4e"></div>
<svg class="a" style="left:1890px;top:303px" width="14" height="8"><path d="M2 6.5 L7 2 L12 6.5" stroke="#777" fill="none" stroke-width="1.2"/></svg>
<div class="a" style="left:1889px;top:318px;width:16px;height:41px;background:#666;border-radius:8px"></div>
<svg class="a" style="left:1890px;top:862px" width="14" height="8"><path d="M2 1.5 L7 6 L12 1.5" stroke="#777" fill="none" stroke-width="1.2"/></svg>
<div class="a" style="left:1395px;top:306.5px;width:36px;height:54px;background:#fff"></div>
<div class="t" style="left:1405px;top:372.5px;font-size:15px;color:#ececec">2</div>
<div class="a" style="left:1395px;top:402.5px;width:36px;height:54px;background:#fff;overflow:hidden;"><div class="a" style="left:1px;top:1px;width:5px;height:4px;background:#2a3550"></div><div class="a" style="left:26px;top:0;width:10px;height:54px;background:#2a3040"></div><div class="a" style="left:26px;top:0;width:10px;height:20px;background:linear-gradient(#b08070,#e0b8a0)"></div><div class="a" style="left:27px;top:23px;width:6px;height:1px;background:#ccc"></div><div class="a" style="left:28px;top:47px;width:6px;height:4px;background:#ddd"></div><div class="a" style="left:5px;top:7px;width:12px;height:2px;background:#1a2030"></div><div class="a" style="left:5px;top:11px;width:18px;height:20px;background:repeating-linear-gradient(#444 0 1px,#fff 1px 2.5px)"></div><div class="a" style="left:5px;top:33px;width:7px;height:1px;background:#223"></div><div class="a" style="left:5px;top:36px;width:18px;height:12px;background:repeating-linear-gradient(#666 0 1px,#fff 1px 3px)"></div></div>
<div class="t" style="left:1405px;top:468.5px;font-size:15px;color:#ececec">3</div>
<div class="a" style="left:1395px;top:498.5px;width:36px;height:54px;background:#fff;overflow:hidden;"><div class="a" style="left:3px;top:2px;width:10px;height:2px;background:#1a2a40"></div><div class="a" style="left:3px;top:5px;width:12px;height:2px;background:#1a2a40"></div><div class="a" style="left:2px;top:9px;width:15px;height:38px;background:repeating-linear-gradient(#bdbdbd 0 2px,#e8e8e8 2px 3px)"></div><div class="a" style="left:19px;top:9px;width:15px;height:38px;background:repeating-linear-gradient(#c4c4c4 0 2px,#ececec 2px 3px)"></div><div class="a" style="left:2px;top:28px;width:15px;height:1px;background:#fff"></div><div class="a" style="left:19px;top:30px;width:15px;height:1px;background:#333"></div><div class="a" style="left:6px;top:50px;width:25px;height:1px;background:#333"></div></div>
<div class="t" style="left:1405px;top:564.5px;font-size:15px;color:#ececec">4</div>
<div class="a" style="left:1395px;top:594.5px;width:36px;height:54px;background:#e6e4e0;overflow:hidden;border:1px solid #ccc;box-sizing:border-box"><div class="a" style="left:0;top:10px;width:36px;height:40px;background:radial-gradient(ellipse at 45% 55%,#f0d890 0,#e8c870 25%,#e4dcc8 50%,#dcdcdc 75%)"></div><div class="a" style="left:0;top:0;width:9px;height:7px;background:#8a2a2a;border-radius:0 0 4px 0"></div><div class="a" style="left:27px;top:1px;width:4px;height:12px;background:#e8c040"></div><div class="a" style="left:20px;top:36px;width:4px;height:3px;background:#503020;border-radius:2px"></div><div class="a" style="left:12px;top:1px;width:14px;height:15px;background:#fff"></div><div class="t" style="left:12px;top:2px;font-size:13px;font-weight:normal;color:#000;width:14px;text-align:center">A</div><div class="a" style="left:12px;top:46px;width:14px;height:1px;background:#667"></div><div class="a" style="left:16px;top:49px;width:15px;height:2px;background:#203040"></div></div>
<div class="t" style="left:1405px;top:660.5px;font-size:15px;color:#ececec">5</div>
<div class="a" style="left:1395px;top:690.5px;width:36px;height:54px;background:#25262c;overflow:hidden;border:1px solid #777;box-sizing:border-box"><div class="a" style="left:2px;top:2px;width:10px;height:1px;background:#ddd"></div><div class="a" style="left:2px;top:17px;width:14px;height:14px;border-radius:7px;background:radial-gradient(#e0d0b0,#806040 60%,#402820)"></div><div class="a" style="left:21px;top:8px;width:13px;height:6px;background:#c8c0b0;border-radius:3px"></div><div class="a" style="left:20px;top:20px;width:10px;height:2px;background:#eee"></div><div class="a" style="left:21px;top:26px;width:13px;height:7px;background:#c8b8a0"></div><div class="a" style="left:21px;top:37px;width:12px;height:5px;background:#999"></div><div class="a" style="left:0;top:46px;width:36px;height:8px;background:linear-gradient(90deg,#c08030 0 10%,#202020 10% 25%,#902020 25% 45%,#202020 45% 55%,#d02020 55% 72%,#202020 72% 80%,#eee 80% 90%,#202020 90%)"></div><div class="a" style="left:13px;top:1px;width:14px;height:15px;background:#fff"></div><div class="t" style="left:13px;top:2px;font-size:14px;font-weight:normal;color:#000;width:14px;text-align:center">A</div></div>
<div class="t" style="left:1405px;top:756.5px;font-size:15px;color:#ececec">6</div>
<div class="a" style="left:1395px;top:786.5px;width:36px;height:54px;background:#9ecbf2;overflow:hidden;border:1px solid #6aa0d8;box-sizing:border-box"><div class="a" style="left:2px;top:2px;width:8px;height:2px;background:#3a6090"></div><div class="a" style="left:2px;top:6px;width:6px;height:2px;background:#3a6090"></div><div class="a" style="left:2px;top:10px;width:9px;height:2px;background:#3a6090"></div><div class="a" style="left:2px;top:18px;width:32px;height:10px;background:linear-gradient(#8ab4dc,#a8cdee)"></div><div class="a" style="left:3px;top:22px;width:14px;height:5px;background:#7a9ab8"></div><div class="a" style="left:2px;top:31px;width:32px;height:20px;background:repeating-linear-gradient(90deg,#6a90b8 0 7px,transparent 7px 11px);opacity:.55"></div><div class="a" style="left:2px;top:37px;width:32px;height:1px;background:#3a5a80"></div><div class="a" style="left:2px;top:46px;width:32px;height:1px;background:#3a5a80"></div><div class="a" style="left:11px;top:2px;width:16px;height:20px;background:#fff"></div><div class="t" style="left:11px;top:3px;font-size:19px;font-weight:bold;color:#000;width:16px;text-align:center">A</div></div>
<div class="a" style="left:1401px;top:848px;width:19px;height:21px;background:#2d8ceb"></div>
<div class="t" style="left:1405px;top:851px;font-size:15px;color:#fff">7</div>
<div class="a" style="left:1370px;top:873px;width:537px;height:38px;background:#535353;border-top:1px solid #4d4d4d"></div>
<div class="t" style="left:1377px;top:885px;font-size:15.5px;color:#e8e8e8;transform:scaleX(0.93);transform-origin:0 0">76 Pages in 76 Spreads</div>
<svg class="a" style="left:1765px;top:882px" width="30" height="20"><path d="M1 9 H9 V18 H1 Z M5 9 V4 H13 L17 8 V15 H9" stroke="#c8c8c8" fill="none" stroke-width="1.6"/><path d="M22 16 L26 16 L24 19 Z" fill="#c8c8c8"/></svg>
<svg class="a" style="left:1812px;top:883px" width="18" height="18"><path d="M1 1 H17 V17 H7 L1 11 Z" fill="#c8c8c8"/><path d="M1 11 H7 V17" fill="#535353"/></svg>
<svg class="a" style="left:1854px;top:882px" width="18" height="20"><path d="M1 3 H17 M6 3 V1 H12 V3 M3 5 V19 H15 V5 M7 7 V17 M11 7 V17" stroke="#c8c8c8" fill="none" stroke-width="1.6"/></svg>
<div class="a" style="left:1368px;top:911px;width:539px;height:5px;background:#3a3a3a"></div>
<!-- stroke/swatches/cc -->
<div class="a" style="left:1369px;top:916px;width:538px;height:42px;background:#444"></div>
<div class="a" style="left:1455px;top:916px;width:1px;height:42px;background:#3a3a3a"></div>
<div class="a" style="left:1565px;top:916px;width:1px;height:42px;background:#3a3a3a"></div>
<div class="a" style="left:1566px;top:916px;width:137px;height:42px;background:#535353"></div>
<div class="ptab" style="left:1388px;top:930px">Stroke</div>
<div class="ptab" style="left:1474px;top:930px">Swatches</div>
<svg class="a" style="left:1576px;top:931px" width="9" height="14"><path d="M1.5 5.5 L4.5 1.5 L7.5 5.5 M1.5 8.5 L4.5 12.5 L7.5 8.5" stroke="#c8c8c8" fill="none" stroke-width="1.5"/></svg>
<div class="ptab" style="left:1593px;top:930px;color:#f2f2f2">CC Libraries</div>
<div class="a" style="left:1368px;top:958px;width:539px;height:4px;background:#3a3a3a"></div>
<div class="a" style="left:1369px;top:962px;width:538px;height:40px;background:#444"></div>
<div class="a" style="left:1369px;top:962px;width:145px;height:40px;background:#535353"></div>
<div class="a" style="left:1628px;top:962px;width:1px;height:40px;background:#3a3a3a"></div>
<svg class="a" style="left:1381px;top:977px" width="9" height="14"><path d="M1.5 5.5 L4.5 1.5 L7.5 5.5 M1.5 8.5 L4.5 12.5 L7.5 8.5" stroke="#c8c8c8" fill="none" stroke-width="1.5"/></svg>
<div class="ptab" style="left:1397px;top:976px;color:#f2f2f2">Object Styles</div>
<div class="ptab" style="left:1532px;top:976px">Text Wrap</div>
<div class="t" style="left:1555px;top:974px;font-size:26px;color:rgba(200,200,200,.55);transform:scaleX(0.95);transform-origin:0 0">Activate Windows</div>
<div class="a" style="left:1882px;top:977px;width:16px;height:12px;background:repeating-linear-gradient(#c8c8c8 0 2px,transparent 2px 3.5px)"></div>
<!-- right edge strip -->
<div class="a" style="left:1907px;top:173px;width:13px;height:829px;background:#535353;border-left:1px solid #444"></div>
<div class="a" style="left:1914px;top:183px;width:2px;height:819px;background:#363636"></div>

</div>
</body></html>
